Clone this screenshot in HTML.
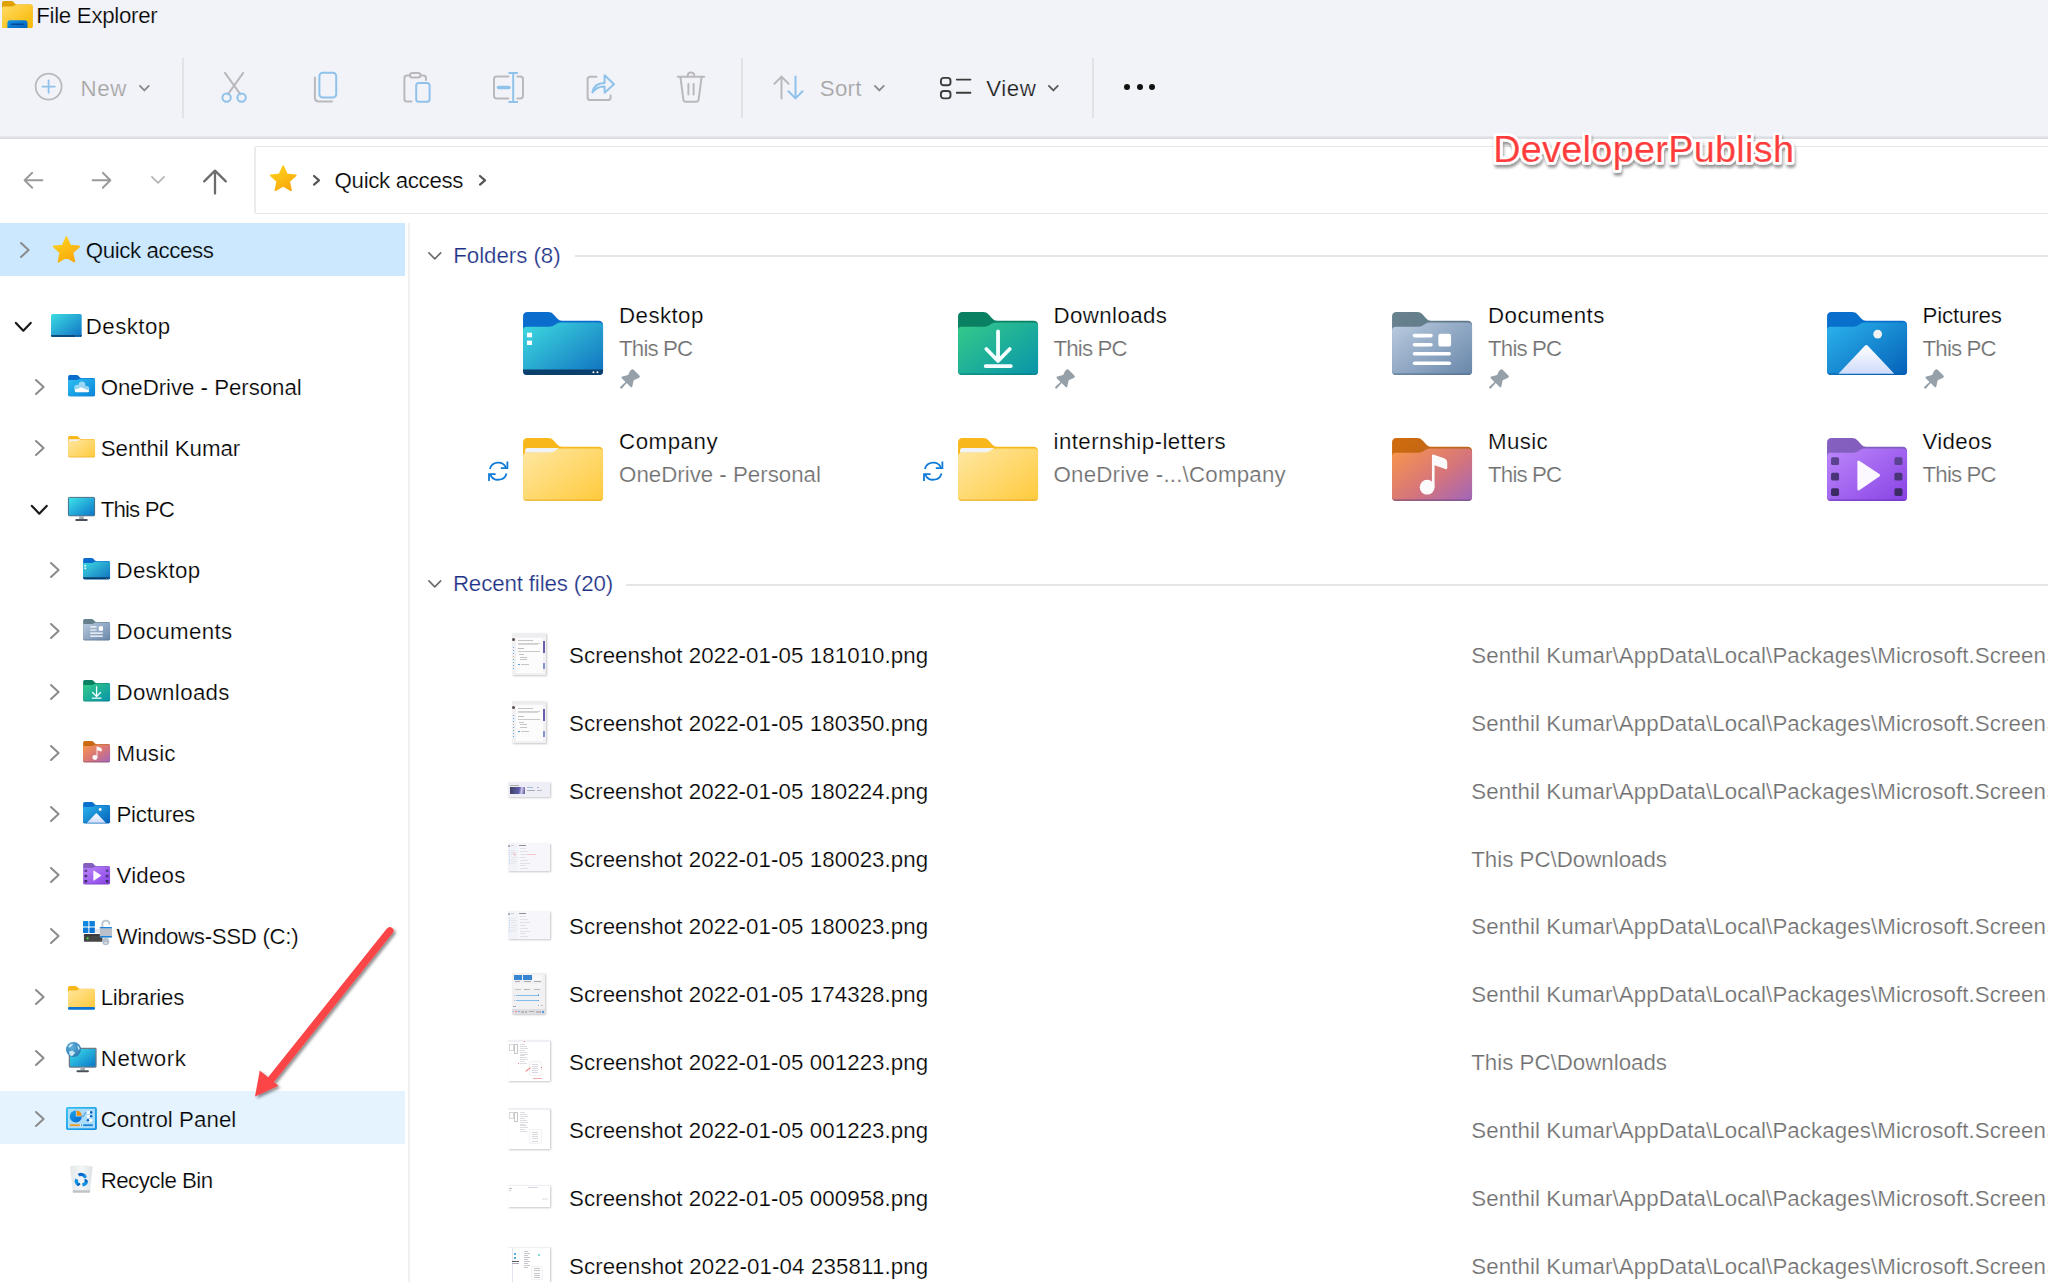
<!DOCTYPE html><html><head><meta charset="utf-8"><title>File Explorer</title><style>html,body{margin:0;padding:0;background:#fff;}body{width:2048px;height:1282px;overflow:hidden;position:relative;font-family:"Liberation Sans",sans-serif;}.t{position:absolute;white-space:pre;line-height:1;font-family:"Liberation Sans",sans-serif;}i{display:block;font-style:normal}</style></head><body><div style="position:absolute;left:0px;top:0px;width:2048px;height:136px;background:#f2f3f9;"></div>
<div style="position:absolute;left:0px;top:136px;width:2048px;height:3px;background:#dddee4;"></div>
<div style="position:absolute;left:0px;top:136px;width:2048px;height:1px;background:#e6e7ec;"></div>
<div style="position:absolute;left:254px;top:145.6px;width:1810px;height:68px;border:1.4px solid #e6e6e6;border-left:2px solid #ececec;border-radius:2px;background:#fff;box-sizing:border-box"></div>
<div style="position:absolute;left:0px;top:223px;width:405px;height:52.5px;background:#cce8ff;"></div>
<div style="position:absolute;left:0px;top:1091.2px;width:405.4px;height:53.3px;background:#e5f3ff;"></div>
<div style="position:absolute;left:407.5px;top:223px;width:2px;height:1060px;background:#f0f0f0;"></div>
<svg style="position:absolute;left:1.6px;top:1.2px;overflow:visible" width="30.6" height="27" viewBox="0 0 30.6 27" ><defs><linearGradient id="g1" x1="0" y1="0" x2="1" y2="1"><stop offset="0" stop-color="#ffdc64"/><stop offset="1" stop-color="#f8b600"/></linearGradient><linearGradient id="g2" x1="0" y1="0" x2="1" y2="1"><stop offset="0" stop-color="#1294ea"/><stop offset="1" stop-color="#0460b8"/></linearGradient></defs><path d="M0 2Q0 0 2 0H9.4Q10.8 0 11.6 1L12.8 2.6Q13.4 3.4 14.6 3.4H28.6Q30.6 3.4 30.6 5.4V25Q30.6 27 28.6 27H2Q0 27 0 25Z" fill="#dfa000"/><path d="M0 7.2Q0 5.6 1.6 5.6H10Q11.4 5.6 12.2 4.8L12.9 4.1Q13.6 3.5 14.8 3.5H29Q30.6 3.5 30.6 5.1V25.4Q30.6 27 29 27H1.6Q0 27 0 25.4Z" fill="url(#g1)"/><path d="M5.4 27V22Q5.4 19.2 8.2 19.2H22.7Q25.5 19.2 25.5 22V27Z" fill="url(#g2)"/><rect x="8.8" y="22.6" width="13" height="1.3" rx="0.6" fill="#0a4696"/></svg>
<svg style="position:absolute;left:33px;top:71px;overflow:visible" width="32" height="32" viewBox="0 0 32 32" ><g fill="none" stroke-width="2" stroke-linecap="round" stroke-linejoin="round"><circle cx="15.6" cy="15.6" r="13" stroke="#b9b9bd" stroke-width="1.8"/><path d="M15.6 9.4V21.8M9.4 15.6H21.8" stroke="#8fc2ea" stroke-width="1.8"/></g></svg>
<svg style="position:absolute;left:138.7px;top:85px;overflow:visible" width="10.7" height="6.4" viewBox="0 0 10.7 6.4" ><g fill="none" stroke-width="1.8" stroke-linecap="round" stroke-linejoin="round"><path d="M0.9 0.9L5.35 5.5L9.799999999999999 0.9" stroke="#8a8a8a"/></g></svg>
<div style="position:absolute;left:182.2px;top:57.6px;width:2px;height:60.2px;background:#e1e1e6;"></div>
<svg style="position:absolute;left:219px;top:71px;overflow:visible" width="30" height="33" viewBox="0 0 30 33" ><g fill="none" stroke-width="2" stroke-linecap="round" stroke-linejoin="round"><path d="M6 1.8L21.2 23.2M24.2 1.8L9 23.2" stroke="#b9b9bd"/><circle cx="7.6" cy="26.6" r="4.2" stroke="#8fc2ea"/><circle cx="22.6" cy="26.6" r="4.2" stroke="#8fc2ea"/></g></svg>
<svg style="position:absolute;left:313px;top:71px;overflow:visible" width="26" height="33" viewBox="0 0 26 33" ><g fill="none" stroke-width="2" stroke-linecap="round" stroke-linejoin="round"><path d="M1.9 6.4V26.6Q1.9 30.6 5.9 30.6H19" stroke="#b9b9bd"/><rect x="6.4" y="1.8" width="16.8" height="24.8" rx="3.4" stroke="#8fc2ea"/></g></svg>
<svg style="position:absolute;left:402px;top:71px;overflow:visible" width="30" height="33" viewBox="0 0 30 33" ><g fill="none" stroke-width="2" stroke-linecap="round" stroke-linejoin="round"><path d="M9.5 30.6H5Q2.4 30.6 2.4 28V7.2Q2.4 4.6 5 4.6H8M18.5 4.6H21.4Q24 4.6 24 7.2V9" stroke="#b9b9bd"/><rect x="8" y="2" width="10.5" height="4.6" rx="2.3" stroke="#b9b9bd"/><rect x="14.2" y="12" width="13.4" height="18.8" rx="2.6" stroke="#8fc2ea"/></g></svg>
<svg style="position:absolute;left:492px;top:71px;overflow:visible" width="33" height="33" viewBox="0 0 33 33" ><g fill="none" stroke-width="2" stroke-linecap="round" stroke-linejoin="round"><path d="M16.4 27.4H4.6Q2 27.4 2 24.8V8.2Q2 5.6 4.6 5.6H16.4M25.4 5.6H28.4Q31 5.6 31 8.2V24.8Q31 27.4 28.4 27.4H25.4" stroke="#b9b9bd"/><path d="M21.2 2V31M17.2 2H25.2M17.2 31H25.2" stroke="#8fc2ea"/><path d="M6.4 16.5H17" stroke="#8fc2ea" stroke-width="3.4"/></g></svg>
<svg style="position:absolute;left:585px;top:72px;overflow:visible" width="31" height="31" viewBox="0 0 31 31" ><g fill="none" stroke-width="2" stroke-linecap="round" stroke-linejoin="round"><path d="M11.4 4.8H5.2Q2.6 4.8 2.6 7.4V25.4Q2.6 28 5.2 28H23Q25.6 28 25.6 25.4V23.4" stroke="#b9b9bd"/><path d="M7.4 20.4Q9 11 19.6 11V3.2L29 12.2L19.6 20.8V14.4Q12 14 7.4 20.4Z" stroke="#8fc2ea"/></g></svg>
<svg style="position:absolute;left:676px;top:71px;overflow:visible" width="30" height="33" viewBox="0 0 30 33" ><g fill="none" stroke-width="2" stroke-linecap="round" stroke-linejoin="round"><path d="M1.8 5.8H28.2M11.6 5.4Q11.6 1.6 15 1.6Q18.4 1.6 18.4 5.4M4.4 6L7.4 28.6Q7.7 30.8 10 30.8H20Q22.3 30.8 22.6 28.6L25.6 6M12.4 13V23.6M17.6 13V23.6" stroke="#b9b9bd"/></g></svg>
<div style="position:absolute;left:741.4px;top:57.6px;width:2px;height:60.2px;background:#e1e1e6;"></div>
<svg style="position:absolute;left:773px;top:75px;overflow:visible" width="32" height="25" viewBox="0 0 32 25" ><g fill="none" stroke-width="2" stroke-linecap="round" stroke-linejoin="round"><path d="M8.5 23.6V1.6M1.4 8.8L8.5 1.6L15.6 8.8" stroke="#b9b9bd"/><path d="M22.5 1.4V23.4M15.4 16.2L22.5 23.4L29.6 16.2" stroke="#8fc2ea"/></g></svg>
<svg style="position:absolute;left:874px;top:84.9px;overflow:visible" width="10.7" height="6.4" viewBox="0 0 10.7 6.4" ><g fill="none" stroke-width="1.8" stroke-linecap="round" stroke-linejoin="round"><path d="M0.9 0.9L5.35 5.5L9.799999999999999 0.9" stroke="#8a8a8a"/></g></svg>
<svg style="position:absolute;left:939px;top:75.5px;overflow:visible" width="33" height="24" viewBox="0 0 33 24" ><g fill="none" stroke-width="1.9" stroke-linecap="round" stroke-linejoin="round"><rect x="1.9" y="1.9" width="9.6" height="7.4" rx="2.8" stroke="#3c3c3c"/><rect x="1.9" y="15" width="9.6" height="7.4" rx="2.8" stroke="#3c3c3c"/><path d="M17.8 3.6H31.4M17.8 16.8H31.4" stroke="#3c3c3c"/></g></svg>
<svg style="position:absolute;left:1048px;top:84.9px;overflow:visible" width="10.7" height="6.4" viewBox="0 0 10.7 6.4" ><g fill="none" stroke-width="1.8" stroke-linecap="round" stroke-linejoin="round"><path d="M0.9 0.9L5.35 5.5L9.799999999999999 0.9" stroke="#5a5a5a"/></g></svg>
<div style="position:absolute;left:1091.6px;top:57.6px;width:2px;height:60.2px;background:#e1e1e6;"></div>
<div style="position:absolute;left:1124.4px;top:84.3px;width:6px;height:6px;border-radius:50%;background:#111"></div>
<div style="position:absolute;left:1136.5px;top:84.3px;width:6px;height:6px;border-radius:50%;background:#111"></div>
<div style="position:absolute;left:1148.6px;top:84.3px;width:6px;height:6px;border-radius:50%;background:#111"></div>
<svg style="position:absolute;left:23px;top:171px;overflow:visible" width="21" height="19" viewBox="0 0 21 19" ><g fill="none" stroke-width="1.9" stroke-linecap="round" stroke-linejoin="round"><path d="M19.4 9.3H1.8M9.2 1.8L1.6 9.3L9.2 16.8" stroke="#9a9a9a"/></g></svg>
<svg style="position:absolute;left:91px;top:171px;overflow:visible" width="21" height="19" viewBox="0 0 21 19" ><g fill="none" stroke-width="1.9" stroke-linecap="round" stroke-linejoin="round"><path d="M1.6 9.3H19.2M11.8 1.8L19.4 9.3L11.8 16.8" stroke="#9a9a9a"/></g></svg>
<svg style="position:absolute;left:151px;top:176px;overflow:visible" width="14" height="7.8" viewBox="0 0 14 7.8" ><g fill="none" stroke-width="1.6" stroke-linecap="round" stroke-linejoin="round"><path d="M0.9 0.9L7.0 6.8999999999999995L13.1 0.9" stroke="#b2b2b2"/></g></svg>
<svg style="position:absolute;left:202px;top:169px;overflow:visible" width="26" height="26" viewBox="0 0 26 26" ><g fill="none" stroke-width="2.3" stroke-linecap="round" stroke-linejoin="round"><path d="M13 24.6V2M2.2 12.4L13 1.6L23.8 12.4" stroke="#6c6c6c"/></g></svg>
<svg style="position:absolute;left:269.2px;top:165.4px;overflow:visible" width="28.4" height="28.4" viewBox="-4 -2 108 108" ><defs><linearGradient id="g3" x1="0.2" y1="0" x2="0.8" y2="1"><stop offset="0" stop-color="#ffd21c"/><stop offset="1" stop-color="#f8a60a"/></linearGradient></defs><path d="M50.0 3.0L63.8 34.0L97.6 37.5L72.3 60.3L79.4 93.5L50.0 76.5L20.6 93.5L27.7 60.3L2.4 37.5L36.2 34.0Z" fill="url(#g3)" stroke="url(#g3)" stroke-width="7" stroke-linejoin="round"/></svg>
<svg style="position:absolute;left:313px;top:174.6px;overflow:visible" width="7" height="10.6" viewBox="0 0 7 10.6" ><g fill="none" stroke-width="2.2" stroke-linecap="round" stroke-linejoin="round"><path d="M1 1L6 5.3L1 9.6" stroke="#555"/></g></svg>
<svg style="position:absolute;left:478.8px;top:174.6px;overflow:visible" width="7" height="10.6" viewBox="0 0 7 10.6" ><g fill="none" stroke-width="2.2" stroke-linecap="round" stroke-linejoin="round"><path d="M1 1L6 5.3L1 9.6" stroke="#555"/></g></svg>
<svg style="position:absolute;left:19.6px;top:242.29999999999998px;overflow:visible" width="9.6" height="16" viewBox="0 0 9.6 16" ><g fill="none" stroke-width="2" stroke-linecap="round" stroke-linejoin="round"><path d="M1 1L8.6 8.0L1 15" stroke="#8a8a8a"/></g></svg>
<svg style="position:absolute;left:51.6px;top:235.89999999999998px;overflow:visible" width="28.8" height="28.8" viewBox="-4 -2 108 108" ><defs><linearGradient id="g4" x1="0.2" y1="0" x2="0.8" y2="1"><stop offset="0" stop-color="#ffd21c"/><stop offset="1" stop-color="#f8a60a"/></linearGradient></defs><path d="M50.0 3.0L63.8 34.0L97.6 37.5L72.3 60.3L79.4 93.5L50.0 76.5L20.6 93.5L27.7 60.3L2.4 37.5L36.2 34.0Z" fill="url(#g4)" stroke="url(#g4)" stroke-width="7" stroke-linejoin="round"/></svg>
<svg style="position:absolute;left:15.2px;top:321.6px;overflow:visible" width="16.6" height="9.6" viewBox="0 0 16.6 9.6" ><g fill="none" stroke-width="2.2" stroke-linecap="round" stroke-linejoin="round"><path d="M0.9 0.9L8.3 8.7L15.700000000000001 0.9" stroke="#1a1a1a"/></g></svg>
<svg style="position:absolute;left:51px;top:314.00000000000006px;overflow:visible" width="30.7" height="23" viewBox="0 0 30.7 23" ><defs><linearGradient id="g5" x1="0" y1="0" x2="1" y2="1"><stop offset="0" stop-color="#3cdce2"/><stop offset="1" stop-color="#1072c6"/></linearGradient></defs><rect x="0" y="0" width="30.7" height="23" rx="1.6" fill="url(#g5)"/><path d="M0 20.9H30.7V21.4Q30.7 23 29.1 23H1.6Q0 23 0 21.4Z" fill="#0c4c7c"/><rect x="24.3" y="21.3" width="1.6" height="1.7" fill="#1a80d0"/><rect x="27" y="21.3" width="1.6" height="1.7" fill="#1a80d0"/></svg>
<svg style="position:absolute;left:34.6px;top:379.20000000000005px;overflow:visible" width="9.6" height="16" viewBox="0 0 9.6 16" ><g fill="none" stroke-width="2" stroke-linecap="round" stroke-linejoin="round"><path d="M1 1L8.6 8.0L1 15" stroke="#8a8a8a"/></g></svg>
<svg style="position:absolute;left:68px;top:375.1px;overflow:visible" width="27.2" height="21.2" viewBox="0 0 80 63" ><defs><linearGradient id="g6" x1="0" y1="0.1" x2="1" y2="1"><stop offset="0" stop-color="#2cbcf0"/><stop offset="1" stop-color="#0a84d8"/></linearGradient></defs><path d="M0 4.5Q0 0 4.5 0H25Q28.5 0 30.6 2.4L34.2 6.6Q36 8.8 39 8.8H75.5Q80 8.8 80 13.3V58.5Q80 63 75.5 63H4.5Q0 63 0 58.5Z" fill="#0a6ccd"/><path d="M0 18.2Q0 14.7 3.5 14.7H26Q29.5 14.7 32 12.8L33.8 11.6Q35.6 10.5 38.5 10.5H76Q80 10.5 80 14.5V59Q80 63 76 63H4Q0 63 0 59Z" fill="url(#g6)"/><g opacity="0.55" fill="#fff"><circle cx="27.5" cy="38.5" r="9.5"/><circle cx="41" cy="30" r="10.5"/><circle cx="54.5" cy="41.5" r="8.5"/><rect x="27" y="38" width="28" height="12"/></g><path d="M26 51.5Q19 51.5 19.5 46Q20.5 41.5 26 42L38.5 36.5L56 43.5Q63 44.5 62.5 48.5Q61.5 51.5 57 51.5Z" fill="#fff"/></svg>
<svg style="position:absolute;left:34.6px;top:440.20000000000005px;overflow:visible" width="9.6" height="16" viewBox="0 0 9.6 16" ><g fill="none" stroke-width="2" stroke-linecap="round" stroke-linejoin="round"><path d="M1 1L8.6 8.0L1 15" stroke="#8a8a8a"/></g></svg>
<svg style="position:absolute;left:68px;top:436.1px;overflow:visible" width="27.2" height="21.2" viewBox="0 0 80 63" ><defs><linearGradient id="g8" x1="0" y1="0.1" x2="1" y2="1"><stop offset="0" stop-color="#ffe69e"/><stop offset="1" stop-color="#ffca3c"/></linearGradient></defs><path d="M0 4.5Q0 0 4.5 0H25Q28.5 0 30.6 2.4L34.2 6.6Q36 8.8 39 8.8H75.5Q80 8.8 80 13.3V58.5Q80 63 75.5 63H4.5Q0 63 0 58.5Z" fill="#f8b81c"/><path d="M2 12.5Q2 10 4.5 10H36L31 14.8H2Z" fill="#f1f3f7"/><path d="M0 18.2Q0 14.7 3.5 14.7H26Q29.5 14.7 32 12.8L33.8 11.6Q35.6 10.5 38.5 10.5H76Q80 10.5 80 14.5V59Q80 63 76 63H4Q0 63 0 59Z" fill="url(#g8)"/><path d="M0 61.2H80V59Q80 63 76 63H4Q0 63 0 59Z" fill="#e8ac28" opacity="0.55"/></svg>
<svg style="position:absolute;left:30.5px;top:504.6px;overflow:visible" width="16.6" height="9.6" viewBox="0 0 16.6 9.6" ><g fill="none" stroke-width="2.2" stroke-linecap="round" stroke-linejoin="round"><path d="M0.9 0.9L8.3 8.7L15.700000000000001 0.9" stroke="#1a1a1a"/></g></svg>
<svg style="position:absolute;left:68px;top:496.6px;overflow:visible" width="27" height="24.2" viewBox="0 0 27 24.2" ><defs><linearGradient id="g10" x1="0" y1="0" x2="1" y2="1"><stop offset="0" stop-color="#3ee4ea"/><stop offset="1" stop-color="#0a74c8"/></linearGradient></defs><rect x="0.4" y="0.4" width="26.2" height="18.4" rx="0.8" fill="url(#g10)" stroke="#3d6478" stroke-width="0.9"/><rect x="11.2" y="19.2" width="4.6" height="2.9" fill="#a4aab4"/><rect x="7.3" y="22.0" width="12.4" height="1.9" rx="0.9" fill="#4a5058"/></svg>
<svg style="position:absolute;left:49.8px;top:562.2px;overflow:visible" width="9.6" height="16" viewBox="0 0 9.6 16" ><g fill="none" stroke-width="2" stroke-linecap="round" stroke-linejoin="round"><path d="M1 1L8.6 8.0L1 15" stroke="#8a8a8a"/></g></svg>
<svg style="position:absolute;left:83px;top:558.1px;overflow:visible" width="27.2" height="21.2" viewBox="0 0 80 63" ><defs><linearGradient id="g11" x1="0" y1="0.1" x2="1" y2="1"><stop offset="0" stop-color="#3cd6de"/><stop offset="1" stop-color="#1070c0"/></linearGradient></defs><path d="M0 4.5Q0 0 4.5 0H25Q28.5 0 30.6 2.4L34.2 6.6Q36 8.8 39 8.8H75.5Q80 8.8 80 13.3V58.5Q80 63 75.5 63H4.5Q0 63 0 58.5Z" fill="#0a6ccd"/><path d="M0 18.2Q0 14.7 3.5 14.7H26Q29.5 14.7 32 12.8L33.8 11.6Q35.6 10.5 38.5 10.5H76Q80 10.5 80 14.5V59Q80 63 76 63H4Q0 63 0 59Z" fill="url(#g11)"/><path d="M0 57.6H80V59Q80 63 76 63H4Q0 63 0 59Z" fill="#0b3f6c"/><rect x="3.9" y="20.7" width="5.1" height="4.6" fill="#fff"/><rect x="3.9" y="28.6" width="5.1" height="4.4" fill="#fff"/><circle cx="70.4" cy="60.2" r="1" fill="#fff"/><circle cx="74.4" cy="60.2" r="1" fill="#fff"/></svg>
<svg style="position:absolute;left:49.8px;top:623.2px;overflow:visible" width="9.6" height="16" viewBox="0 0 9.6 16" ><g fill="none" stroke-width="2" stroke-linecap="round" stroke-linejoin="round"><path d="M1 1L8.6 8.0L1 15" stroke="#8a8a8a"/></g></svg>
<svg style="position:absolute;left:83px;top:619.1px;overflow:visible" width="27.2" height="21.2" viewBox="0 0 80 63" ><defs><linearGradient id="g13" x1="0" y1="0.1" x2="1" y2="1"><stop offset="0" stop-color="#b6c8dc"/><stop offset="1" stop-color="#6886aa"/></linearGradient><linearGradient id="t14" x1="0" y1="0" x2="1" y2="1"><stop offset="0" stop-color="#68828e"/><stop offset="1" stop-color="#587082"/></linearGradient></defs><path d="M0 4.5Q0 0 4.5 0H25Q28.5 0 30.6 2.4L34.2 6.6Q36 8.8 39 8.8H75.5Q80 8.8 80 13.3V58.5Q80 63 75.5 63H4.5Q0 63 0 58.5Z" fill="url(#t14)"/><path d="M0 18.2Q0 14.7 3.5 14.7H26Q29.5 14.7 32 12.8L33.8 11.6Q35.6 10.5 38.5 10.5H76Q80 10.5 80 14.5V59Q80 63 76 63H4Q0 63 0 59Z" fill="url(#g13)"/><path d="M0 61.2H80V59Q80 63 76 63H4Q0 63 0 59Z" fill="#506a88" opacity="0.55"/><g fill="#fff"><rect x="20.7" y="21.8" width="20" height="3.6" rx="1.8"/><rect x="20.7" y="30.9" width="20" height="3.6" rx="1.8"/><rect x="20.7" y="40" width="38.3" height="3.6" rx="1.8"/><rect x="20.7" y="49.4" width="38.3" height="3.6" rx="1.8"/><rect x="46.3" y="21.8" width="12.7" height="12.8" rx="2.2"/></g></svg>
<svg style="position:absolute;left:49.8px;top:684.2px;overflow:visible" width="9.6" height="16" viewBox="0 0 9.6 16" ><g fill="none" stroke-width="2" stroke-linecap="round" stroke-linejoin="round"><path d="M1 1L8.6 8.0L1 15" stroke="#8a8a8a"/></g></svg>
<svg style="position:absolute;left:83px;top:680.1px;overflow:visible" width="27.2" height="21.2" viewBox="0 0 80 63" ><defs><linearGradient id="g15" x1="0" y1="0.1" x2="1" y2="1"><stop offset="0" stop-color="#33c88a"/><stop offset="1" stop-color="#0894aa"/></linearGradient></defs><path d="M0 4.5Q0 0 4.5 0H25Q28.5 0 30.6 2.4L34.2 6.6Q36 8.8 39 8.8H75.5Q80 8.8 80 13.3V58.5Q80 63 75.5 63H4.5Q0 63 0 58.5Z" fill="#0a8062"/><path d="M0 18.2Q0 14.7 3.5 14.7H26Q29.5 14.7 32 12.8L33.8 11.6Q35.6 10.5 38.5 10.5H76Q80 10.5 80 14.5V59Q80 63 76 63H4Q0 63 0 59Z" fill="url(#g15)"/><path d="M0 61.2H80V59Q80 63 76 63H4Q0 63 0 59Z" fill="#067a80" opacity="0.55"/><path d="M40 19.5V48.5M28.3 37L40 49L51.7 37M27.6 54.1H52.8" fill="none" stroke="#f6ffff" stroke-width="3.8" stroke-linecap="round" stroke-linejoin="round"/></svg>
<svg style="position:absolute;left:49.8px;top:745.2px;overflow:visible" width="9.6" height="16" viewBox="0 0 9.6 16" ><g fill="none" stroke-width="2" stroke-linecap="round" stroke-linejoin="round"><path d="M1 1L8.6 8.0L1 15" stroke="#8a8a8a"/></g></svg>
<svg style="position:absolute;left:83px;top:741.1px;overflow:visible" width="27.2" height="21.2" viewBox="0 0 80 63" ><defs><linearGradient id="g17" x1="0" y1="0.1" x2="1" y2="1"><stop offset="0" stop-color="#f6944e"/><stop offset="0.55" stop-color="#d4747c"/><stop offset="1" stop-color="#a066bc"/></linearGradient><linearGradient id="t18" x1="0" y1="0" x2="1" y2="1"><stop offset="0" stop-color="#d06c0c"/><stop offset="1" stop-color="#a85e2a"/></linearGradient></defs><path d="M0 4.5Q0 0 4.5 0H25Q28.5 0 30.6 2.4L34.2 6.6Q36 8.8 39 8.8H75.5Q80 8.8 80 13.3V58.5Q80 63 75.5 63H4.5Q0 63 0 58.5Z" fill="url(#t18)"/><path d="M0 18.2Q0 14.7 3.5 14.7H26Q29.5 14.7 32 12.8L33.8 11.6Q35.6 10.5 38.5 10.5H76Q80 10.5 80 14.5V59Q80 63 76 63H4Q0 63 0 59Z" fill="url(#g17)"/><path d="M0 61.2H80V59Q80 63 76 63H4Q0 63 0 59Z" fill="#704a80" opacity="0.55"/><g fill="#fbfbfb"><circle cx="35.1" cy="49.2" r="7.4"/><path d="M39.9 17.8Q39.9 16 41.8 16.7L52 20.3Q55.2 21.5 55.2 25V30Q55.2 31.8 53.4 31.1L42.5 27.2V49.2H39.9Z"/></g></svg>
<svg style="position:absolute;left:49.8px;top:806.2px;overflow:visible" width="9.6" height="16" viewBox="0 0 9.6 16" ><g fill="none" stroke-width="2" stroke-linecap="round" stroke-linejoin="round"><path d="M1 1L8.6 8.0L1 15" stroke="#8a8a8a"/></g></svg>
<svg style="position:absolute;left:83px;top:802.1px;overflow:visible" width="27.2" height="21.2" viewBox="0 0 80 63" ><defs><linearGradient id="g20" x1="0" y1="0.1" x2="1" y2="1"><stop offset="0" stop-color="#2ab0ea"/><stop offset="1" stop-color="#0460b8"/></linearGradient></defs><path d="M0 4.5Q0 0 4.5 0H25Q28.5 0 30.6 2.4L34.2 6.6Q36 8.8 39 8.8H75.5Q80 8.8 80 13.3V58.5Q80 63 75.5 63H4.5Q0 63 0 58.5Z" fill="#0870cc"/><path d="M0 18.2Q0 14.7 3.5 14.7H26Q29.5 14.7 32 12.8L33.8 11.6Q35.6 10.5 38.5 10.5H76Q80 10.5 80 14.5V59Q80 63 76 63H4Q0 63 0 59Z" fill="url(#g20)"/><path d="M0 61.2H80V59Q80 63 76 63H4Q0 63 0 59Z" fill="#0458a8" opacity="0.55"/><defs><linearGradient id="g19" x1="0" y1="0" x2="0" y2="1"><stop offset="0" stop-color="#ffffff"/><stop offset="1" stop-color="#cfdbfb"/></linearGradient></defs><circle cx="50.6" cy="22.1" r="4.4" fill="#f3f3f3"/><path d="M11.4 61.8L37.6 34Q39.3 32.2 41 34L67.2 61.8Z" fill="url(#g19)"/></svg>
<svg style="position:absolute;left:49.8px;top:867.2px;overflow:visible" width="9.6" height="16" viewBox="0 0 9.6 16" ><g fill="none" stroke-width="2" stroke-linecap="round" stroke-linejoin="round"><path d="M1 1L8.6 8.0L1 15" stroke="#8a8a8a"/></g></svg>
<svg style="position:absolute;left:83px;top:863.1px;overflow:visible" width="27.2" height="21.2" viewBox="0 0 80 63" ><defs><linearGradient id="g22" x1="0" y1="0.1" x2="1" y2="1"><stop offset="0" stop-color="#ba84fa"/><stop offset="1" stop-color="#8842e4"/></linearGradient><linearGradient id="t23" x1="0" y1="0" x2="1" y2="1"><stop offset="0" stop-color="#8660c0"/><stop offset="1" stop-color="#7a58b8"/></linearGradient></defs><path d="M0 4.5Q0 0 4.5 0H25Q28.5 0 30.6 2.4L34.2 6.6Q36 8.8 39 8.8H75.5Q80 8.8 80 13.3V58.5Q80 63 75.5 63H4.5Q0 63 0 58.5Z" fill="url(#t23)"/><path d="M0 18.2Q0 14.7 3.5 14.7H26Q29.5 14.7 32 12.8L33.8 11.6Q35.6 10.5 38.5 10.5H76Q80 10.5 80 14.5V59Q80 63 76 63H4Q0 63 0 59Z" fill="url(#g22)"/><path d="M0 61.2H80V59Q80 63 76 63H4Q0 63 0 59Z" fill="#6a34b8" opacity="0.55"/><rect x="4" y="19.3" width="8" height="7.7" rx="1.6" fill="#5b4290"/><rect x="4" y="34.8" width="8" height="7.7" rx="1.6" fill="#4a3478"/><rect x="4" y="50.2" width="8" height="7.7" rx="1.6" fill="#3c2a64"/><rect x="67.4" y="19.3" width="8" height="7.7" rx="1.6" fill="#5b4290"/><rect x="67.4" y="34.8" width="8" height="7.7" rx="1.6" fill="#4a3478"/><rect x="67.4" y="50.2" width="8" height="7.7" rx="1.6" fill="#3c2a64"/><path d="M30.3 24.3Q30.3 21.6 32.6 23.1L52.3 36Q54 37.2 52.3 38.4L32.6 52Q30.3 53.5 30.3 50.8Z" fill="#fbf8ff"/></svg>
<svg style="position:absolute;left:49.8px;top:928.2px;overflow:visible" width="9.6" height="16" viewBox="0 0 9.6 16" ><g fill="none" stroke-width="2" stroke-linecap="round" stroke-linejoin="round"><path d="M1 1L8.6 8.0L1 15" stroke="#8a8a8a"/></g></svg>
<svg style="position:absolute;left:83px;top:920.0px;overflow:visible" width="29.4" height="25.2" viewBox="0 0 29.4 25.2" ><g fill="#1088e0"><rect x="0" y="1" width="5.4" height="5.4" rx="0.5"/><rect x="6.4" y="1" width="5.5" height="5.4" rx="0.5" fill="#0e80dc"/><rect x="0" y="7.4" width="5.4" height="5.6" rx="0.5" fill="#0c7cd8"/><rect x="6.4" y="7.4" width="5.5" height="5.6" rx="0.5" fill="#0672d2"/></g><rect x="11.9" y="9.1" width="5" height="4.2" fill="#e4e6ea"/><rect x="0.9" y="14.2" width="18.6" height="7.6" rx="0.8" fill="#444"/><rect x="0.9" y="14.2" width="18.6" height="1.4" rx="0.7" fill="#2e2e2e"/><circle cx="4.6" cy="18.3" r="1.1" fill="#3ee048"/><path d="M19.4 7V3.6Q19.4 0.6 22.9 0.6Q26.2 0.6 26.4 3.8" fill="none" stroke="#b8c4d0" stroke-width="1.8" stroke-linecap="round"/><rect x="16.8" y="6.9" width="12.2" height="10.5" rx="0.8" fill="#b9c0ca"/><rect x="16.8" y="6.9" width="12.2" height="1.4" rx="0.6" fill="#1c84dc"/><rect x="16.8" y="16" width="12.2" height="1.4" rx="0.6" fill="#1c84dc"/><circle cx="22.8" cy="21.6" r="3.6" fill="#b4c0cc"/><ellipse cx="22.8" cy="23" rx="1.4" ry="0.8" fill="#eef2f6"/></svg>
<svg style="position:absolute;left:34.6px;top:989.2px;overflow:visible" width="9.6" height="16" viewBox="0 0 9.6 16" ><g fill="none" stroke-width="2" stroke-linecap="round" stroke-linejoin="round"><path d="M1 1L8.6 8.0L1 15" stroke="#8a8a8a"/></g></svg>
<svg style="position:absolute;left:68px;top:985.8000000000001px;overflow:visible" width="27" height="23.7" viewBox="0 0 27 23.7" ><defs><linearGradient id="g24" x1="0" y1="0" x2="1" y2="1"><stop offset="0" stop-color="#ffe69e"/><stop offset="1" stop-color="#ffc93c"/></linearGradient></defs><path d="M0 2Q0 0 2 0H7Q8.5 0 9.3 0.9L10.3 2Q11 2.7 12.2 2.7H25Q27 2.7 27 4.7V19Q27 21 25 21H2Q0 21 0 19Z" fill="#f8b81c"/><path d="M0 6Q0 4.4 1.6 4.4H8Q9.2 4.4 10 3.8L10.6 3.3Q11.2 2.9 12.4 2.9H25.4Q27 2.9 27 4.5V21H0Z" fill="url(#g24)"/><rect x="0" y="20.9" width="27" height="2.8" rx="1.2" fill="#0a74d0"/></svg>
<svg style="position:absolute;left:34.6px;top:1050.1999999999998px;overflow:visible" width="9.6" height="16" viewBox="0 0 9.6 16" ><g fill="none" stroke-width="2" stroke-linecap="round" stroke-linejoin="round"><path d="M1 1L8.6 8.0L1 15" stroke="#8a8a8a"/></g></svg>
<svg style="position:absolute;left:69.4px;top:1048.2999999999997px;overflow:visible" width="27.4" height="24.5" viewBox="0 0 27.4 24.5" ><defs><linearGradient id="g25" x1="0" y1="0" x2="1" y2="1"><stop offset="0" stop-color="#3ee4ea"/><stop offset="1" stop-color="#0a74c8"/></linearGradient></defs><rect x="0.4" y="0.4" width="26.599999999999998" height="18.7" rx="0.8" fill="url(#g25)" stroke="#6c7a86" stroke-width="1.3"/><rect x="11.399999999999999" y="19.5" width="4.6" height="2.9" fill="#a4aab4"/><rect x="7.499999999999999" y="22.3" width="12.4" height="1.9" rx="0.9" fill="#4a5058"/></svg>
<svg style="position:absolute;left:66.1px;top:1041.8999999999999px;overflow:visible" width="15.0" height="15.0" viewBox="0 0 15 15" ><defs><radialGradient id="g26" cx="0.4" cy="0.35" r="0.7"><stop offset="0" stop-color="#5eb0dc"/><stop offset="1" stop-color="#2878b0"/></radialGradient></defs><circle cx="7.5" cy="7.5" r="7.5" fill="url(#g26)"/><path d="M2.2 4.5Q4 1.8 7.2 1.6L6.2 3.4L3.6 5.8Z M3 9.4L6.4 8.6L9.2 11L6 14.2L3.6 13Z M11.6 3.2Q13.6 4.6 13.8 7.2L12.4 8L11.6 5.6Z" fill="#d6eef6" opacity="0.9"/></svg>
<svg style="position:absolute;left:34.6px;top:1111.1999999999998px;overflow:visible" width="9.6" height="16" viewBox="0 0 9.6 16" ><g fill="none" stroke-width="2" stroke-linecap="round" stroke-linejoin="round"><path d="M1 1L8.6 8.0L1 15" stroke="#8a8a8a"/></g></svg>
<svg style="position:absolute;left:66.1px;top:1106.7999999999997px;overflow:visible" width="30.9" height="23" viewBox="0 0 30.9 23" ><defs><linearGradient id="g27" x1="0" y1="0" x2="1" y2="1"><stop offset="0" stop-color="#34c0f0"/><stop offset="1" stop-color="#0e8ae0"/></linearGradient><linearGradient id="g28" x1="0" y1="0" x2="0.6" y2="1"><stop offset="0" stop-color="#1ea4ea"/><stop offset="1" stop-color="#0670d4"/></linearGradient></defs><rect x="0" y="0" width="30.9" height="23" rx="1.8" fill="url(#g27)"/><rect x="1.9" y="1.7" width="27.1" height="19.6" fill="#abdcf8"/><circle cx="9.8" cy="9.4" r="6" fill="url(#g28)"/><path d="M9.8 9.4V3.2H10.3Q15.8 3.6 16 9.4Z" fill="#abdcf8"/><path d="M10.6 8.7V3.4Q15.2 3.9 15.8 8.7Z" fill="#f28e0c"/><path d="M15.8 9.4Q18 9.9 18.3 7.8Q18.5 5.4 20.8 5.4" fill="none" stroke="#1670c8" stroke-width="0.7"/><g><rect x="20.6" y="4" width="5.8" height="2.8" rx="1.4" fill="#fff"/><circle cx="25.2" cy="5.4" r="1.3" fill="#0a60c4"/><rect x="20.6" y="7.9" width="5.8" height="2.8" rx="1.4" fill="#fff"/><circle cx="25.2" cy="9.3" r="1.3" fill="#0a60c4"/><rect x="20.6" y="11.9" width="5.8" height="2.8" rx="1.4" fill="#fff"/><circle cx="21.9" cy="13.3" r="1.3" fill="#0a60c4"/></g><rect x="4" y="17.3" width="9.7" height="1.8" fill="#f09a28"/><rect x="14.6" y="16.7" width="1.6" height="3" rx="0.5" fill="#fff"/><rect x="15" y="17.2" width="0.8" height="2" fill="#1670c8"/><rect x="17.2" y="17.3" width="9.6" height="1.8" fill="#1a84dc"/></svg>
<svg style="position:absolute;left:70.2px;top:1165.2999999999997px;overflow:visible" width="22.8" height="27.7" viewBox="0 0 22.8 27.7" ><defs><linearGradient id="g29" x1="0" y1="0" x2="1" y2="0"><stop offset="0" stop-color="#e4e8ea"/><stop offset="0.5" stop-color="#f4f6f7"/><stop offset="1" stop-color="#dfe3e5"/></linearGradient></defs><path d="M0 1.4Q11.4 -1 22.8 1.4L20 26.4H2.8Z" fill="url(#g29)"/><path d="M2.7 25.2H20.1L19.9 27.7H2.9Z" fill="#c0c4c8"/><g fill="none" stroke="#0a7cdc" stroke-width="3.2" stroke-linecap="butt"><path d="M8.6 10.2Q11.4 8.2 14.4 10.8" stroke="#0a68cc"/><path d="M14.2 10.2L15.4 13" stroke="#1090e4"/><path d="M6.8 14.2Q5.2 17.4 8.6 19.8" stroke="#1090e4"/><path d="M8.2 18.8L9.4 20.2" stroke="#0860c0"/><path d="M16.4 15.6Q16.6 19 12.4 20" stroke="#1090e4"/><path d="M16.8 15L15 16.2" stroke="#0860c0"/></g></svg>
<svg style="position:absolute;left:428.2px;top:251.9px;overflow:visible" width="13.6" height="7.8" viewBox="0 0 13.6 7.8" ><g fill="none" stroke-width="1.6" stroke-linecap="round" stroke-linejoin="round"><path d="M0.9 0.9L6.8 6.8999999999999995L12.7 0.9" stroke="#6a6a6a"/></g></svg>
<div style="position:absolute;left:574.5px;top:255.2px;width:1480px;height:2px;background:#e5e5e5;"></div>
<svg style="position:absolute;left:428.2px;top:580.4px;overflow:visible" width="13.6" height="7.8" viewBox="0 0 13.6 7.8" ><g fill="none" stroke-width="1.6" stroke-linecap="round" stroke-linejoin="round"><path d="M0.9 0.9L6.8 6.8999999999999995L12.7 0.9" stroke="#6a6a6a"/></g></svg>
<div style="position:absolute;left:626.2px;top:583.7px;width:1430px;height:2px;background:#e5e5e5;"></div>
<svg style="position:absolute;left:523.2px;top:312.3px;overflow:visible" width="80.1" height="63" viewBox="0 0 80 63" ><defs><linearGradient id="g30" x1="0" y1="0.1" x2="1" y2="1"><stop offset="0" stop-color="#3cd6de"/><stop offset="1" stop-color="#1070c0"/></linearGradient></defs><path d="M0 4.5Q0 0 4.5 0H25Q28.5 0 30.6 2.4L34.2 6.6Q36 8.8 39 8.8H75.5Q80 8.8 80 13.3V58.5Q80 63 75.5 63H4.5Q0 63 0 58.5Z" fill="#0a6ccd"/><path d="M0 18.2Q0 14.7 3.5 14.7H26Q29.5 14.7 32 12.8L33.8 11.6Q35.6 10.5 38.5 10.5H76Q80 10.5 80 14.5V59Q80 63 76 63H4Q0 63 0 59Z" fill="url(#g30)"/><path d="M0 57.6H80V59Q80 63 76 63H4Q0 63 0 59Z" fill="#0b3f6c"/><rect x="3.9" y="20.7" width="5.1" height="4.6" fill="#fff"/><rect x="3.9" y="28.6" width="5.1" height="4.4" fill="#fff"/><circle cx="70.4" cy="60.2" r="1" fill="#fff"/><circle cx="74.4" cy="60.2" r="1" fill="#fff"/></svg>
<svg style="position:absolute;left:620.1px;top:369px;overflow:visible" width="20" height="20" viewBox="0 0 20 20" ><path d="M11.6 0.6Q12.6 -0.3 13.7 0.8L19.4 6.6Q20.5 7.8 19.2 8.8L13.7 11.3L12.3 17.5Q11.7 19.1 10.4 17.8L6.7 14.1L2.3 19.1Q1.3 20.1 0.4 19.3Q-0.4 18.4 0.6 17.5L5.5 12.9L1.8 9.2Q0.7 7.9 2.4 7.5L8.1 5.9L10.2 1.7Z" fill="#96a0a8"/></svg>
<svg style="position:absolute;left:957.6px;top:312.3px;overflow:visible" width="80.1" height="63" viewBox="0 0 80 63" ><defs><linearGradient id="g32" x1="0" y1="0.1" x2="1" y2="1"><stop offset="0" stop-color="#33c88a"/><stop offset="1" stop-color="#0894aa"/></linearGradient></defs><path d="M0 4.5Q0 0 4.5 0H25Q28.5 0 30.6 2.4L34.2 6.6Q36 8.8 39 8.8H75.5Q80 8.8 80 13.3V58.5Q80 63 75.5 63H4.5Q0 63 0 58.5Z" fill="#0a8062"/><path d="M0 18.2Q0 14.7 3.5 14.7H26Q29.5 14.7 32 12.8L33.8 11.6Q35.6 10.5 38.5 10.5H76Q80 10.5 80 14.5V59Q80 63 76 63H4Q0 63 0 59Z" fill="url(#g32)"/><path d="M0 61.2H80V59Q80 63 76 63H4Q0 63 0 59Z" fill="#067a80" opacity="0.55"/><path d="M40 19.5V48.5M28.3 37L40 49L51.7 37M27.6 54.1H52.8" fill="none" stroke="#f6ffff" stroke-width="3.8" stroke-linecap="round" stroke-linejoin="round"/></svg>
<svg style="position:absolute;left:1054.5px;top:369px;overflow:visible" width="20" height="20" viewBox="0 0 20 20" ><path d="M11.6 0.6Q12.6 -0.3 13.7 0.8L19.4 6.6Q20.5 7.8 19.2 8.8L13.7 11.3L12.3 17.5Q11.7 19.1 10.4 17.8L6.7 14.1L2.3 19.1Q1.3 20.1 0.4 19.3Q-0.4 18.4 0.6 17.5L5.5 12.9L1.8 9.2Q0.7 7.9 2.4 7.5L8.1 5.9L10.2 1.7Z" fill="#96a0a8"/></svg>
<svg style="position:absolute;left:1392.2px;top:312.3px;overflow:visible" width="80.1" height="63" viewBox="0 0 80 63" ><defs><linearGradient id="g34" x1="0" y1="0.1" x2="1" y2="1"><stop offset="0" stop-color="#b6c8dc"/><stop offset="1" stop-color="#6886aa"/></linearGradient><linearGradient id="t35" x1="0" y1="0" x2="1" y2="1"><stop offset="0" stop-color="#68828e"/><stop offset="1" stop-color="#587082"/></linearGradient></defs><path d="M0 4.5Q0 0 4.5 0H25Q28.5 0 30.6 2.4L34.2 6.6Q36 8.8 39 8.8H75.5Q80 8.8 80 13.3V58.5Q80 63 75.5 63H4.5Q0 63 0 58.5Z" fill="url(#t35)"/><path d="M0 18.2Q0 14.7 3.5 14.7H26Q29.5 14.7 32 12.8L33.8 11.6Q35.6 10.5 38.5 10.5H76Q80 10.5 80 14.5V59Q80 63 76 63H4Q0 63 0 59Z" fill="url(#g34)"/><path d="M0 61.2H80V59Q80 63 76 63H4Q0 63 0 59Z" fill="#506a88" opacity="0.55"/><g fill="#fff"><rect x="20.7" y="21.8" width="20" height="3.6" rx="1.8"/><rect x="20.7" y="30.9" width="20" height="3.6" rx="1.8"/><rect x="20.7" y="40" width="38.3" height="3.6" rx="1.8"/><rect x="20.7" y="49.4" width="38.3" height="3.6" rx="1.8"/><rect x="46.3" y="21.8" width="12.7" height="12.8" rx="2.2"/></g></svg>
<svg style="position:absolute;left:1489.1px;top:369px;overflow:visible" width="20" height="20" viewBox="0 0 20 20" ><path d="M11.6 0.6Q12.6 -0.3 13.7 0.8L19.4 6.6Q20.5 7.8 19.2 8.8L13.7 11.3L12.3 17.5Q11.7 19.1 10.4 17.8L6.7 14.1L2.3 19.1Q1.3 20.1 0.4 19.3Q-0.4 18.4 0.6 17.5L5.5 12.9L1.8 9.2Q0.7 7.9 2.4 7.5L8.1 5.9L10.2 1.7Z" fill="#96a0a8"/></svg>
<svg style="position:absolute;left:1826.7px;top:312.3px;overflow:visible" width="80.1" height="63" viewBox="0 0 80 63" ><defs><linearGradient id="g37" x1="0" y1="0.1" x2="1" y2="1"><stop offset="0" stop-color="#2ab0ea"/><stop offset="1" stop-color="#0460b8"/></linearGradient></defs><path d="M0 4.5Q0 0 4.5 0H25Q28.5 0 30.6 2.4L34.2 6.6Q36 8.8 39 8.8H75.5Q80 8.8 80 13.3V58.5Q80 63 75.5 63H4.5Q0 63 0 58.5Z" fill="#0870cc"/><path d="M0 18.2Q0 14.7 3.5 14.7H26Q29.5 14.7 32 12.8L33.8 11.6Q35.6 10.5 38.5 10.5H76Q80 10.5 80 14.5V59Q80 63 76 63H4Q0 63 0 59Z" fill="url(#g37)"/><path d="M0 61.2H80V59Q80 63 76 63H4Q0 63 0 59Z" fill="#0458a8" opacity="0.55"/><defs><linearGradient id="g36" x1="0" y1="0" x2="0" y2="1"><stop offset="0" stop-color="#ffffff"/><stop offset="1" stop-color="#cfdbfb"/></linearGradient></defs><circle cx="50.6" cy="22.1" r="4.4" fill="#f3f3f3"/><path d="M11.4 61.8L37.6 34Q39.3 32.2 41 34L67.2 61.8Z" fill="url(#g36)"/></svg>
<svg style="position:absolute;left:1923.6px;top:369px;overflow:visible" width="20" height="20" viewBox="0 0 20 20" ><path d="M11.6 0.6Q12.6 -0.3 13.7 0.8L19.4 6.6Q20.5 7.8 19.2 8.8L13.7 11.3L12.3 17.5Q11.7 19.1 10.4 17.8L6.7 14.1L2.3 19.1Q1.3 20.1 0.4 19.3Q-0.4 18.4 0.6 17.5L5.5 12.9L1.8 9.2Q0.7 7.9 2.4 7.5L8.1 5.9L10.2 1.7Z" fill="#96a0a8"/></svg>
<svg style="position:absolute;left:523.2px;top:438.3px;overflow:visible" width="80.1" height="63" viewBox="0 0 80 63" ><defs><linearGradient id="g39" x1="0" y1="0.1" x2="1" y2="1"><stop offset="0" stop-color="#ffe69e"/><stop offset="1" stop-color="#ffca3c"/></linearGradient></defs><path d="M0 4.5Q0 0 4.5 0H25Q28.5 0 30.6 2.4L34.2 6.6Q36 8.8 39 8.8H75.5Q80 8.8 80 13.3V58.5Q80 63 75.5 63H4.5Q0 63 0 58.5Z" fill="#f8b81c"/><path d="M2 12.5Q2 10 4.5 10H36L31 14.8H2Z" fill="#f1f3f7"/><path d="M0 18.2Q0 14.7 3.5 14.7H26Q29.5 14.7 32 12.8L33.8 11.6Q35.6 10.5 38.5 10.5H76Q80 10.5 80 14.5V59Q80 63 76 63H4Q0 63 0 59Z" fill="url(#g39)"/><path d="M0 61.2H80V59Q80 63 76 63H4Q0 63 0 59Z" fill="#e8ac28" opacity="0.55"/></svg>
<svg style="position:absolute;left:488.20000000000005px;top:461.4px;overflow:visible" width="20.4" height="20.4" viewBox="0 0 20.4 20.4" ><g fill="none" stroke="#0f7ad8" stroke-width="1.8"><path d="M1.9 8A8.6 8.6 0 0 1 18 6.6"/><path d="M18.5 12.4A8.6 8.6 0 0 1 2.4 13.8"/><path d="M19.4 0.4V7.2H12.8" stroke-linejoin="miter"/><path d="M1 20V13.2H7.6" stroke-linejoin="miter"/></g></svg>
<svg style="position:absolute;left:957.6px;top:438.3px;overflow:visible" width="80.1" height="63" viewBox="0 0 80 63" ><defs><linearGradient id="g41" x1="0" y1="0.1" x2="1" y2="1"><stop offset="0" stop-color="#ffe69e"/><stop offset="1" stop-color="#ffca3c"/></linearGradient></defs><path d="M0 4.5Q0 0 4.5 0H25Q28.5 0 30.6 2.4L34.2 6.6Q36 8.8 39 8.8H75.5Q80 8.8 80 13.3V58.5Q80 63 75.5 63H4.5Q0 63 0 58.5Z" fill="#f8b81c"/><path d="M2 12.5Q2 10 4.5 10H36L31 14.8H2Z" fill="#f1f3f7"/><path d="M0 18.2Q0 14.7 3.5 14.7H26Q29.5 14.7 32 12.8L33.8 11.6Q35.6 10.5 38.5 10.5H76Q80 10.5 80 14.5V59Q80 63 76 63H4Q0 63 0 59Z" fill="url(#g41)"/><path d="M0 61.2H80V59Q80 63 76 63H4Q0 63 0 59Z" fill="#e8ac28" opacity="0.55"/></svg>
<svg style="position:absolute;left:922.6px;top:461.4px;overflow:visible" width="20.4" height="20.4" viewBox="0 0 20.4 20.4" ><g fill="none" stroke="#0f7ad8" stroke-width="1.8"><path d="M1.9 8A8.6 8.6 0 0 1 18 6.6"/><path d="M18.5 12.4A8.6 8.6 0 0 1 2.4 13.8"/><path d="M19.4 0.4V7.2H12.8" stroke-linejoin="miter"/><path d="M1 20V13.2H7.6" stroke-linejoin="miter"/></g></svg>
<svg style="position:absolute;left:1392.2px;top:438.3px;overflow:visible" width="80.1" height="63" viewBox="0 0 80 63" ><defs><linearGradient id="g43" x1="0" y1="0.1" x2="1" y2="1"><stop offset="0" stop-color="#f6944e"/><stop offset="0.55" stop-color="#d4747c"/><stop offset="1" stop-color="#a066bc"/></linearGradient><linearGradient id="t44" x1="0" y1="0" x2="1" y2="1"><stop offset="0" stop-color="#d06c0c"/><stop offset="1" stop-color="#a85e2a"/></linearGradient></defs><path d="M0 4.5Q0 0 4.5 0H25Q28.5 0 30.6 2.4L34.2 6.6Q36 8.8 39 8.8H75.5Q80 8.8 80 13.3V58.5Q80 63 75.5 63H4.5Q0 63 0 58.5Z" fill="url(#t44)"/><path d="M0 18.2Q0 14.7 3.5 14.7H26Q29.5 14.7 32 12.8L33.8 11.6Q35.6 10.5 38.5 10.5H76Q80 10.5 80 14.5V59Q80 63 76 63H4Q0 63 0 59Z" fill="url(#g43)"/><path d="M0 61.2H80V59Q80 63 76 63H4Q0 63 0 59Z" fill="#704a80" opacity="0.55"/><g fill="#fbfbfb"><circle cx="35.1" cy="49.2" r="7.4"/><path d="M39.9 17.8Q39.9 16 41.8 16.7L52 20.3Q55.2 21.5 55.2 25V30Q55.2 31.8 53.4 31.1L42.5 27.2V49.2H39.9Z"/></g></svg>
<svg style="position:absolute;left:1826.7px;top:438.3px;overflow:visible" width="80.1" height="63" viewBox="0 0 80 63" ><defs><linearGradient id="g45" x1="0" y1="0.1" x2="1" y2="1"><stop offset="0" stop-color="#ba84fa"/><stop offset="1" stop-color="#8842e4"/></linearGradient><linearGradient id="t46" x1="0" y1="0" x2="1" y2="1"><stop offset="0" stop-color="#8660c0"/><stop offset="1" stop-color="#7a58b8"/></linearGradient></defs><path d="M0 4.5Q0 0 4.5 0H25Q28.5 0 30.6 2.4L34.2 6.6Q36 8.8 39 8.8H75.5Q80 8.8 80 13.3V58.5Q80 63 75.5 63H4.5Q0 63 0 58.5Z" fill="url(#t46)"/><path d="M0 18.2Q0 14.7 3.5 14.7H26Q29.5 14.7 32 12.8L33.8 11.6Q35.6 10.5 38.5 10.5H76Q80 10.5 80 14.5V59Q80 63 76 63H4Q0 63 0 59Z" fill="url(#g45)"/><path d="M0 61.2H80V59Q80 63 76 63H4Q0 63 0 59Z" fill="#6a34b8" opacity="0.55"/><rect x="4" y="19.3" width="8" height="7.7" rx="1.6" fill="#5b4290"/><rect x="4" y="34.8" width="8" height="7.7" rx="1.6" fill="#4a3478"/><rect x="4" y="50.2" width="8" height="7.7" rx="1.6" fill="#3c2a64"/><rect x="67.4" y="19.3" width="8" height="7.7" rx="1.6" fill="#5b4290"/><rect x="67.4" y="34.8" width="8" height="7.7" rx="1.6" fill="#4a3478"/><rect x="67.4" y="50.2" width="8" height="7.7" rx="1.6" fill="#3c2a64"/><path d="M30.3 24.3Q30.3 21.6 32.6 23.1L52.3 36Q54 37.2 52.3 38.4L32.6 52Q30.3 53.5 30.3 50.8Z" fill="#fbf8ff"/></svg>
<div style="position:absolute;left:511.7px;top:633.2px;width:34.2px;height:42.3px;background:#f1f1f3;box-shadow:0.5px 1.2px 1.8px rgba(0,0,0,0.22);overflow:hidden"><div style="position:absolute;left:0;top:0;width:100%;height:100%;filter:blur(0.35px);opacity:0.8"><i style="position:absolute;left:0px;top:0px;width:34.2px;height:3.4px;background:#eeeef0;"></i><i style="position:absolute;left:4.2px;top:4.4px;width:27.3px;height:35.6px;background:#fff;"></i><i style="position:absolute;left:31.5px;top:7.8px;width:2.2px;height:12.2px;background:#4a3a9a;"></i><i style="position:absolute;left:31.5px;top:30px;width:2.2px;height:6px;background:#6a78c8;"></i><i style="position:absolute;left:0.8px;top:4.6px;width:3px;height:3.6px;background:#3a2a2a;border-radius:50%"></i><i style="position:absolute;left:6px;top:7px;width:15px;height:0.8px;background:#b8b8b8;"></i><i style="position:absolute;left:6px;top:9.6px;width:22px;height:0.7px;background:#c8c8c8;"></i><i style="position:absolute;left:6px;top:11.2px;width:20px;height:0.7px;background:#d0d0d0;"></i><i style="position:absolute;left:6px;top:15.2px;width:6px;height:0.7px;background:#b0b0b0;"></i><i style="position:absolute;left:6px;top:17.6px;width:22px;height:0.7px;background:#c0c0c0;"></i><i style="position:absolute;left:7px;top:21px;width:5px;height:0.7px;background:#bbb;"></i><i style="position:absolute;left:8px;top:23.4px;width:7px;height:0.7px;background:#bbb;"></i><i style="position:absolute;left:8.6px;top:26px;width:7px;height:0.7px;background:#bbb;"></i><i style="position:absolute;left:6px;top:30.4px;width:2px;height:1px;background:#3a8ae0;"></i><i style="position:absolute;left:9px;top:30.4px;width:8px;height:0.7px;background:#bbb;"></i><i style="position:absolute;left:1.6px;top:14px;width:1px;height:1.2px;background:#3a9ae8;"></i><i style="position:absolute;left:1.6px;top:17px;width:1px;height:1.2px;background:#3a9ae8;"></i><i style="position:absolute;left:1.6px;top:20px;width:1px;height:1.2px;background:#3a9ae8;"></i><i style="position:absolute;left:1.6px;top:23px;width:1px;height:1.2px;background:#e8a040;"></i><i style="position:absolute;left:1.6px;top:26px;width:1px;height:1.2px;background:#4a8ac8;"></i><i style="position:absolute;left:1.6px;top:29px;width:1px;height:1.2px;background:#4ab8b8;"></i><i style="position:absolute;left:1.6px;top:32px;width:1px;height:1.2px;background:#3a9ae8;"></i><i style="position:absolute;left:1.6px;top:35px;width:1px;height:1.2px;background:#3a9ae8;"></i></div></div>
<div style="position:absolute;left:511.7px;top:701.1px;width:34.2px;height:42.3px;background:#f1f1f3;box-shadow:0.5px 1.2px 1.8px rgba(0,0,0,0.22);overflow:hidden"><div style="position:absolute;left:0;top:0;width:100%;height:100%;filter:blur(0.35px);opacity:0.8"><i style="position:absolute;left:0px;top:0px;width:34.2px;height:3.4px;background:#eeeef0;"></i><i style="position:absolute;left:4.2px;top:4.4px;width:27.3px;height:35.6px;background:#fff;"></i><i style="position:absolute;left:31.5px;top:7.8px;width:2.2px;height:12.2px;background:#4a3a9a;"></i><i style="position:absolute;left:31.5px;top:30px;width:2.2px;height:6px;background:#6a78c8;"></i><i style="position:absolute;left:0.8px;top:4.6px;width:3px;height:3.6px;background:#3a2a2a;border-radius:50%"></i><i style="position:absolute;left:6px;top:7px;width:15px;height:0.8px;background:#b8b8b8;"></i><i style="position:absolute;left:6px;top:9.6px;width:22px;height:0.7px;background:#c8c8c8;"></i><i style="position:absolute;left:6px;top:11.2px;width:20px;height:0.7px;background:#d0d0d0;"></i><i style="position:absolute;left:6px;top:15.2px;width:6px;height:0.7px;background:#b0b0b0;"></i><i style="position:absolute;left:6px;top:17.6px;width:22px;height:0.7px;background:#c0c0c0;"></i><i style="position:absolute;left:7px;top:21px;width:5px;height:0.7px;background:#bbb;"></i><i style="position:absolute;left:8px;top:23.4px;width:7px;height:0.7px;background:#bbb;"></i><i style="position:absolute;left:8.6px;top:26px;width:7px;height:0.7px;background:#bbb;"></i><i style="position:absolute;left:6px;top:30.4px;width:2px;height:1px;background:#3a8ae0;"></i><i style="position:absolute;left:9px;top:30.4px;width:8px;height:0.7px;background:#bbb;"></i><i style="position:absolute;left:1.6px;top:14px;width:1px;height:1.2px;background:#3a9ae8;"></i><i style="position:absolute;left:1.6px;top:17px;width:1px;height:1.2px;background:#3a9ae8;"></i><i style="position:absolute;left:1.6px;top:20px;width:1px;height:1.2px;background:#3a9ae8;"></i><i style="position:absolute;left:1.6px;top:23px;width:1px;height:1.2px;background:#e8a040;"></i><i style="position:absolute;left:1.6px;top:26px;width:1px;height:1.2px;background:#4a8ac8;"></i><i style="position:absolute;left:1.6px;top:29px;width:1px;height:1.2px;background:#4ab8b8;"></i><i style="position:absolute;left:1.6px;top:32px;width:1px;height:1.2px;background:#3a9ae8;"></i><i style="position:absolute;left:1.6px;top:35px;width:1px;height:1.2px;background:#3a9ae8;"></i></div></div>
<div style="position:absolute;left:507.8px;top:782.1px;width:41.8px;height:14.6px;background:#eeeef6;box-shadow:0.5px 1.2px 1.8px rgba(0,0,0,0.22);overflow:hidden"><div style="position:absolute;left:0;top:0;width:100%;height:100%;filter:blur(0.35px);opacity:0.8"><i style="position:absolute;left:1.8px;top:4.9px;width:15.2px;height:7.3px;background:linear-gradient(100deg,#14143c,#3a3a9a 60%,#c8c0f0 75%,#2a2a6a);"></i><i style="position:absolute;left:2px;top:2.8px;width:9px;height:0.7px;background:#999;"></i><i style="position:absolute;left:19px;top:5.4px;width:6px;height:0.7px;background:#8ab0e0;"></i><i style="position:absolute;left:19px;top:8px;width:8px;height:0.9px;background:#99a;"></i><i style="position:absolute;left:29px;top:8px;width:5px;height:0.7px;background:#aab;"></i><i style="position:absolute;left:29px;top:5.4px;width:2px;height:0.7px;background:#8ab0e0;"></i></div></div>
<div style="position:absolute;left:507.8px;top:842.9px;width:41.8px;height:28.2px;background:#f7f7fb;box-shadow:0.5px 1.2px 1.8px rgba(0,0,0,0.22);overflow:hidden"><div style="position:absolute;left:0;top:0;width:100%;height:100%;filter:blur(0.35px);opacity:0.8"><i style="position:absolute;left:0.6px;top:2px;width:2px;height:2.2px;background:#444;border-radius:40%"></i><i style="position:absolute;left:3.6px;top:2.4px;width:3px;height:0.6px;background:#aaa;"></i><i style="position:absolute;left:11.4px;top:2.2px;width:7px;height:0.9px;background:#777;"></i><i style="position:absolute;left:0px;top:0px;width:10.6px;height:28.2px;background:rgba(232,232,246,0.45);"></i><i style="position:absolute;left:12px;top:5.2px;width:6px;height:0.6px;background:#dcdce4;"></i><i style="position:absolute;left:12px;top:8.1px;width:8px;height:0.6px;background:#dcdce4;"></i><i style="position:absolute;left:12px;top:11.0px;width:10px;height:0.6px;background:#dcdce4;"></i><i style="position:absolute;left:12px;top:13.899999999999999px;width:6px;height:0.6px;background:#dcdce4;"></i><i style="position:absolute;left:12px;top:16.8px;width:8px;height:0.6px;background:#dcdce4;"></i><i style="position:absolute;left:12px;top:19.7px;width:10px;height:0.6px;background:#dcdce4;"></i><i style="position:absolute;left:12px;top:22.599999999999998px;width:6px;height:0.6px;background:#dcdce4;"></i><i style="position:absolute;left:12px;top:25.5px;width:8px;height:0.6px;background:#dcdce4;"></i><i style="position:absolute;left:1.4px;top:7.0px;width:1px;height:0.9px;background:#a8d0f2;"></i><i style="position:absolute;left:1.4px;top:9.2px;width:1px;height:0.9px;background:#a8d0f2;"></i><i style="position:absolute;left:1.4px;top:11.4px;width:1px;height:0.9px;background:#a8d0f2;"></i><i style="position:absolute;left:1.4px;top:13.600000000000001px;width:1px;height:0.9px;background:#a8d0f2;"></i><i style="position:absolute;left:1.4px;top:15.8px;width:1px;height:0.9px;background:#a8d0f2;"></i><i style="position:absolute;left:1.4px;top:18.0px;width:1px;height:0.9px;background:#a8d0f2;"></i><i style="position:absolute;left:1.4px;top:20.200000000000003px;width:1px;height:0.9px;background:#a8d0f2;"></i><i style="position:absolute;left:3.2px;top:7.1px;width:4px;height:0.5px;background:#e2e2ea;"></i><i style="position:absolute;left:3.2px;top:9.3px;width:6px;height:0.5px;background:#e2e2ea;"></i><i style="position:absolute;left:3.2px;top:11.5px;width:4px;height:0.5px;background:#e2e2ea;"></i><i style="position:absolute;left:3.2px;top:13.7px;width:6px;height:0.5px;background:#e2e2ea;"></i><i style="position:absolute;left:3.2px;top:15.9px;width:4px;height:0.5px;background:#e2e2ea;"></i><i style="position:absolute;left:3.2px;top:18.1px;width:6px;height:0.5px;background:#e2e2ea;"></i><i style="position:absolute;left:3.2px;top:20.3px;width:4px;height:0.5px;background:#e2e2ea;"></i><i style="position:absolute;left:19px;top:10.8px;width:9px;height:0.6px;background:#f6bcbc;"></i><i style="position:absolute;left:5.5px;top:11px;width:3.4px;height:0.8px;background:#f0a0a0;transform:rotate(35deg)"></i></div></div>
<div style="position:absolute;left:507.8px;top:910.9px;width:41.8px;height:28.2px;background:#f7f7fb;box-shadow:0.5px 1.2px 1.8px rgba(0,0,0,0.22);overflow:hidden"><div style="position:absolute;left:0;top:0;width:100%;height:100%;filter:blur(0.35px);opacity:0.8"><i style="position:absolute;left:0.6px;top:2px;width:2px;height:2.2px;background:#444;border-radius:40%"></i><i style="position:absolute;left:3.6px;top:2.4px;width:3px;height:0.6px;background:#aaa;"></i><i style="position:absolute;left:11.4px;top:2.2px;width:7px;height:0.9px;background:#777;"></i><i style="position:absolute;left:0px;top:0px;width:10.6px;height:28.2px;background:rgba(232,232,246,0.45);"></i><i style="position:absolute;left:12px;top:5.2px;width:6px;height:0.6px;background:#dcdce4;"></i><i style="position:absolute;left:12px;top:8.1px;width:8px;height:0.6px;background:#dcdce4;"></i><i style="position:absolute;left:12px;top:11.0px;width:10px;height:0.6px;background:#dcdce4;"></i><i style="position:absolute;left:12px;top:13.899999999999999px;width:6px;height:0.6px;background:#dcdce4;"></i><i style="position:absolute;left:12px;top:16.8px;width:8px;height:0.6px;background:#dcdce4;"></i><i style="position:absolute;left:12px;top:19.7px;width:10px;height:0.6px;background:#dcdce4;"></i><i style="position:absolute;left:12px;top:22.599999999999998px;width:6px;height:0.6px;background:#dcdce4;"></i><i style="position:absolute;left:12px;top:25.5px;width:8px;height:0.6px;background:#dcdce4;"></i><i style="position:absolute;left:1.4px;top:7.0px;width:1px;height:0.9px;background:#a8d0f2;"></i><i style="position:absolute;left:1.4px;top:9.2px;width:1px;height:0.9px;background:#a8d0f2;"></i><i style="position:absolute;left:1.4px;top:11.4px;width:1px;height:0.9px;background:#a8d0f2;"></i><i style="position:absolute;left:1.4px;top:13.600000000000001px;width:1px;height:0.9px;background:#a8d0f2;"></i><i style="position:absolute;left:1.4px;top:15.8px;width:1px;height:0.9px;background:#a8d0f2;"></i><i style="position:absolute;left:1.4px;top:18.0px;width:1px;height:0.9px;background:#a8d0f2;"></i><i style="position:absolute;left:1.4px;top:20.200000000000003px;width:1px;height:0.9px;background:#a8d0f2;"></i><i style="position:absolute;left:3.2px;top:7.1px;width:4px;height:0.5px;background:#e2e2ea;"></i><i style="position:absolute;left:3.2px;top:9.3px;width:6px;height:0.5px;background:#e2e2ea;"></i><i style="position:absolute;left:3.2px;top:11.5px;width:4px;height:0.5px;background:#e2e2ea;"></i><i style="position:absolute;left:3.2px;top:13.7px;width:6px;height:0.5px;background:#e2e2ea;"></i><i style="position:absolute;left:3.2px;top:15.9px;width:4px;height:0.5px;background:#e2e2ea;"></i><i style="position:absolute;left:3.2px;top:18.1px;width:6px;height:0.5px;background:#e2e2ea;"></i><i style="position:absolute;left:3.2px;top:20.3px;width:4px;height:0.5px;background:#e2e2ea;"></i></div></div>
<div style="position:absolute;left:511.7px;top:972.5px;width:33px;height:41.6px;background:#f1f1f3;box-shadow:0.5px 1.2px 1.8px rgba(0,0,0,0.22);overflow:hidden"><div style="position:absolute;left:0;top:0;width:100%;height:100%;filter:blur(0.35px);opacity:0.8"><i style="position:absolute;left:1.9px;top:2.6px;width:8.4px;height:4.8px;background:#0a6ccc;"></i><i style="position:absolute;left:11.7px;top:2.6px;width:8.6px;height:4.8px;background:#0a6ccc;"></i><i style="position:absolute;left:21.6px;top:2.6px;width:8.4px;height:4.8px;background:#fafafa;"></i><i style="position:absolute;left:3.4px;top:8.4px;width:5px;height:0.6px;background:#999;"></i><i style="position:absolute;left:12.6px;top:8.4px;width:7px;height:0.6px;background:#999;"></i><i style="position:absolute;left:22.2px;top:8.4px;width:7px;height:0.6px;background:#999;"></i><i style="position:absolute;left:1.9px;top:11.4px;width:8.4px;height:4.6px;background:#f8f8f8;"></i><i style="position:absolute;left:11.7px;top:11.4px;width:8.6px;height:4.6px;background:#f8f8f8;"></i><i style="position:absolute;left:21.6px;top:11.4px;width:8.4px;height:4.6px;background:#f8f8f8;"></i><i style="position:absolute;left:3px;top:16.6px;width:6px;height:0.6px;background:#bbb;"></i><i style="position:absolute;left:12.6px;top:16.6px;width:6px;height:0.6px;background:#aaa;"></i><i style="position:absolute;left:22.2px;top:16.6px;width:6px;height:0.6px;background:#aaa;"></i><i style="position:absolute;left:4.5px;top:22.4px;width:22.6px;height:0.8px;background:#6ab0e8;"></i><i style="position:absolute;left:26.4px;top:21.8px;width:1.3px;height:1.8px;background:#2a84d8;border-radius:50%"></i><i style="position:absolute;left:2.2px;top:22px;width:1.2px;height:1.4px;background:#aaa;"></i><i style="position:absolute;left:4.5px;top:27.8px;width:22.6px;height:0.8px;background:#6ab0e8;"></i><i style="position:absolute;left:26.4px;top:27.2px;width:1.3px;height:1.8px;background:#2a84d8;border-radius:50%"></i><i style="position:absolute;left:2.2px;top:27.4px;width:1.2px;height:1.4px;background:#aaa;"></i><i style="position:absolute;left:1.6px;top:33px;width:3px;height:0.8px;background:#999;"></i><i style="position:absolute;left:26px;top:32.6px;width:1.6px;height:1.4px;background:#aaa;"></i><i style="position:absolute;left:29.6px;top:32.6px;width:1.4px;height:1.4px;background:#aaa;"></i><i style="position:absolute;left:0px;top:36.9px;width:33px;height:4.7px;background:#d9d9de;"></i><i style="position:absolute;left:1px;top:38.4px;width:1.4px;height:1.6px;background:#c8a8d8;"></i><i style="position:absolute;left:3.6px;top:38.4px;width:1.6px;height:1.6px;background:#f06a6a;"></i><i style="position:absolute;left:6.6px;top:38.4px;width:1.6px;height:1.6px;background:#5aa8f0;"></i><i style="position:absolute;left:9.6px;top:38.2px;width:2.4px;height:2px;background:#aaa;"></i><i style="position:absolute;left:13.6px;top:38px;width:2px;height:2.4px;background:#aaa;"></i><i style="position:absolute;left:17.4px;top:38.8px;width:5px;height:0.8px;background:#999;"></i><i style="position:absolute;left:24px;top:38.6px;width:5px;height:1.6px;background:#b0b0b4;"></i><i style="position:absolute;left:30.4px;top:38.2px;width:1.6px;height:2px;background:#2a84e0;"></i></div></div>
<div style="position:absolute;left:508px;top:1040px;width:42px;height:40.8px;background:#fff;box-shadow:0.5px 1.2px 1.8px rgba(0,0,0,0.22);overflow:hidden"><div style="position:absolute;left:0;top:0;width:100%;height:100%;filter:blur(0.35px);opacity:0.8"><i style="position:absolute;left:0px;top:0px;width:42px;height:1.6px;background:#ececf4;"></i><i style="position:absolute;left:1px;top:3.6px;width:3px;height:5px;background:#fff;border:0.5px solid #ccc"></i><i style="position:absolute;left:6px;top:4px;width:2.4px;height:8px;background:#fff;border:0.5px solid #bbb"></i><i style="position:absolute;left:12px;top:4.0px;width:5.0px;height:0.5px;background:#d4d4dc;"></i><i style="position:absolute;left:12px;top:5.9px;width:6.5px;height:0.5px;background:#d4d4dc;"></i><i style="position:absolute;left:12px;top:7.8px;width:8.0px;height:0.5px;background:#d4d4dc;"></i><i style="position:absolute;left:12px;top:9.7px;width:5.0px;height:0.5px;background:#d4d4dc;"></i><i style="position:absolute;left:12px;top:11.6px;width:6.5px;height:0.5px;background:#d4d4dc;"></i><i style="position:absolute;left:12px;top:13.5px;width:8.0px;height:0.5px;background:#d4d4dc;"></i><i style="position:absolute;left:12px;top:15.399999999999999px;width:5.0px;height:0.5px;background:#d4d4dc;"></i><i style="position:absolute;left:12px;top:17.299999999999997px;width:6.5px;height:0.5px;background:#d4d4dc;"></i><i style="position:absolute;left:12px;top:19.2px;width:8.0px;height:0.5px;background:#d4d4dc;"></i><i style="position:absolute;left:12px;top:21.099999999999998px;width:5.0px;height:0.5px;background:#d4d4dc;"></i><i style="position:absolute;left:12px;top:23.0px;width:6.5px;height:0.5px;background:#d4d4dc;"></i><i style="position:absolute;left:22px;top:22px;width:11px;height:13px;background:#fdfdfd;box-shadow:0 0 1px rgba(0,0,0,.4)"></i><i style="position:absolute;left:24px;top:23.6px;width:6px;height:0.5px;background:#d0d0d8;"></i><i style="position:absolute;left:24px;top:25.8px;width:6px;height:0.5px;background:#d0d0d8;"></i><i style="position:absolute;left:24px;top:28.0px;width:6px;height:0.5px;background:#d0d0d8;"></i><i style="position:absolute;left:24px;top:30.200000000000003px;width:6px;height:0.5px;background:#d0d0d8;"></i><i style="position:absolute;left:24px;top:32.400000000000006px;width:6px;height:0.5px;background:#d0d0d8;"></i><i style="position:absolute;left:15.6px;top:0.6px;width:1.4px;height:1.4px;background:#e66;"></i><i style="position:absolute;left:10px;top:23px;width:1.2px;height:1.2px;background:#e66;"></i><i style="position:absolute;left:33px;top:27px;width:1.4px;height:1.4px;background:#e44;"></i><i style="position:absolute;left:17px;top:29px;width:6px;height:0.8px;background:#e55;transform:rotate(-38deg)"></i><i style="position:absolute;left:25px;top:37.6px;width:9px;height:0.7px;background:#e99;"></i></div></div>
<div style="position:absolute;left:508px;top:1108.2px;width:42px;height:40.8px;background:#fff;box-shadow:0.5px 1.2px 1.8px rgba(0,0,0,0.22);overflow:hidden"><div style="position:absolute;left:0;top:0;width:100%;height:100%;filter:blur(0.35px);opacity:0.8"><i style="position:absolute;left:0px;top:0px;width:42px;height:1.6px;background:#ececf4;"></i><i style="position:absolute;left:1px;top:3.6px;width:3px;height:5px;background:#fff;border:0.5px solid #ccc"></i><i style="position:absolute;left:6px;top:4px;width:2.4px;height:8px;background:#fff;border:0.5px solid #bbb"></i><i style="position:absolute;left:12px;top:4.0px;width:5.0px;height:0.5px;background:#d4d4dc;"></i><i style="position:absolute;left:12px;top:5.9px;width:6.5px;height:0.5px;background:#d4d4dc;"></i><i style="position:absolute;left:12px;top:7.8px;width:8.0px;height:0.5px;background:#d4d4dc;"></i><i style="position:absolute;left:12px;top:9.7px;width:5.0px;height:0.5px;background:#d4d4dc;"></i><i style="position:absolute;left:12px;top:11.6px;width:6.5px;height:0.5px;background:#d4d4dc;"></i><i style="position:absolute;left:12px;top:13.5px;width:8.0px;height:0.5px;background:#d4d4dc;"></i><i style="position:absolute;left:12px;top:15.399999999999999px;width:5.0px;height:0.5px;background:#d4d4dc;"></i><i style="position:absolute;left:12px;top:17.299999999999997px;width:6.5px;height:0.5px;background:#d4d4dc;"></i><i style="position:absolute;left:12px;top:19.2px;width:8.0px;height:0.5px;background:#d4d4dc;"></i><i style="position:absolute;left:12px;top:21.099999999999998px;width:5.0px;height:0.5px;background:#d4d4dc;"></i><i style="position:absolute;left:12px;top:23.0px;width:6.5px;height:0.5px;background:#d4d4dc;"></i><i style="position:absolute;left:22px;top:22px;width:11px;height:13px;background:#fdfdfd;box-shadow:0 0 1px rgba(0,0,0,.4)"></i><i style="position:absolute;left:24px;top:23.6px;width:6px;height:0.5px;background:#d0d0d8;"></i><i style="position:absolute;left:24px;top:25.8px;width:6px;height:0.5px;background:#d0d0d8;"></i><i style="position:absolute;left:24px;top:28.0px;width:6px;height:0.5px;background:#d0d0d8;"></i><i style="position:absolute;left:24px;top:30.200000000000003px;width:6px;height:0.5px;background:#d0d0d8;"></i><i style="position:absolute;left:24px;top:32.400000000000006px;width:6px;height:0.5px;background:#d0d0d8;"></i></div></div>
<div style="position:absolute;left:508px;top:1185px;width:42px;height:22.4px;background:#fff;box-shadow:0.5px 1.2px 1.8px rgba(0,0,0,0.22);overflow:hidden"><div style="position:absolute;left:0;top:0;width:100%;height:100%;filter:blur(0.35px);opacity:0.8"><i style="position:absolute;left:0px;top:0px;width:42px;height:1.4px;background:#ececf4;"></i><i style="position:absolute;left:1px;top:3.2px;width:3px;height:0.6px;background:#aaa;"></i><i style="position:absolute;left:1px;top:5px;width:2px;height:0.6px;background:#bbb;"></i><i style="position:absolute;left:34px;top:13px;width:6px;height:1.6px;background:#e8e8ee;"></i><i style="position:absolute;left:20px;top:1.8px;width:10px;height:0.5px;background:#ccd;"></i></div></div>
<div style="position:absolute;left:508px;top:1246.7px;width:42px;height:40px;background:#fff;box-shadow:0.5px 1.2px 1.8px rgba(0,0,0,0.22);overflow:hidden"><div style="position:absolute;left:0;top:0;width:100%;height:100%;filter:blur(0.35px);opacity:0.8"><i style="position:absolute;left:0px;top:0px;width:42px;height:1.6px;background:#ececf4;"></i><i style="position:absolute;left:3.6px;top:1.6px;width:0.5px;height:38px;background:#dde;"></i><i style="position:absolute;left:6px;top:6px;width:2.4px;height:2.4px;background:#2a9ae8;"></i><i style="position:absolute;left:6px;top:10px;width:2.4px;height:2.4px;background:#2a9ae8;"></i><i style="position:absolute;left:4px;top:14.4px;width:7px;height:1.4px;background:#334;"></i><i style="position:absolute;left:4px;top:16.4px;width:7px;height:0.8px;background:#99a;"></i><i style="position:absolute;left:16px;top:4px;width:4px;height:0.5px;background:#b8b8c0;"></i><i style="position:absolute;left:16px;top:6px;width:6px;height:0.5px;background:#b8b8c0;"></i><i style="position:absolute;left:16px;top:8px;width:4px;height:0.5px;background:#b8b8c0;"></i><i style="position:absolute;left:16px;top:10px;width:6px;height:0.5px;background:#b8b8c0;"></i><i style="position:absolute;left:16px;top:12px;width:4px;height:0.5px;background:#b8b8c0;"></i><i style="position:absolute;left:16px;top:14px;width:6px;height:0.5px;background:#b8b8c0;"></i><i style="position:absolute;left:16px;top:16px;width:4px;height:0.5px;background:#b8b8c0;"></i><i style="position:absolute;left:16px;top:18px;width:6px;height:0.5px;background:#b8b8c0;"></i><i style="position:absolute;left:16px;top:20px;width:4px;height:0.5px;background:#b8b8c0;"></i><i style="position:absolute;left:30px;top:7px;width:2.4px;height:2.4px;background:#2ac8b8;border-radius:50%"></i><i style="position:absolute;left:24px;top:20px;width:10px;height:12px;background:#fdfdfd;box-shadow:0 0 1px rgba(0,0,0,.4)"></i><i style="position:absolute;left:26px;top:21.6px;width:6px;height:0.5px;background:#b8b8c0;"></i><i style="position:absolute;left:26px;top:23.8px;width:6px;height:0.5px;background:#b8b8c0;"></i><i style="position:absolute;left:26px;top:26.0px;width:6px;height:0.5px;background:#b8b8c0;"></i><i style="position:absolute;left:26px;top:28.200000000000003px;width:6px;height:0.5px;background:#b8b8c0;"></i><i style="position:absolute;left:26px;top:30.400000000000002px;width:6px;height:0.5px;background:#b8b8c0;"></i></div></div>
<svg style="position:absolute;left:0;top:0;overflow:visible;pointer-events:none" width="2048" height="1282" viewBox="0 0 2048 1282">
<defs><filter id="ash" x="-20%" y="-20%" width="140%" height="140%"><feGaussianBlur in="SourceAlpha" stdDeviation="1.6"/><feOffset dx="1.5" dy="2"/><feComponentTransfer><feFuncA type="linear" slope="0.45"/></feComponentTransfer><feMerge><feMergeNode/><feMergeNode in="SourceGraphic"/></feMerge></filter></defs>
<g filter="url(#ash)" fill="#fb4447" stroke="none">
<path d="M389.8 930.8L270.2 1080.6" stroke="#fb4447" stroke-width="7.4" stroke-linecap="round" fill="none"/>
<path d="M255 1096.4L259.8 1070.6L278.4 1085.8Z"/>
</g></svg>
<svg style="position:absolute;left:0;top:0;overflow:visible" width="2048" height="230" viewBox="0 0 2048 230">
<defs><filter id="wsh" x="-5%" y="-30%" width="110%" height="170%"><feGaussianBlur in="SourceAlpha" stdDeviation="1.7"/><feOffset dx="1.2" dy="2.6"/><feComponentTransfer><feFuncA type="linear" slope="0.42"/></feComponentTransfer><feMerge><feMergeNode/><feMergeNode in="SourceGraphic"/></feMerge></filter></defs>
<g filter="url(#wsh)"><text x="1493.2" y="161.6" font-family="Liberation Sans, sans-serif" font-size="37.7" letter-spacing="0.36" fill="#ff3a3a" stroke="#fff" stroke-width="5.6" stroke-linejoin="round" paint-order="stroke">DeveloperPublish</text></g>
<text x="1493.2" y="161.6" font-family="Liberation Sans, sans-serif" font-size="37.7" letter-spacing="0.36" fill="#ff3a3a" stroke="#fff" stroke-width="0.22">DeveloperPublish</text></svg>
<span class="t" style="left:36.20px;top:5.37px;font-size:22.3px;color:#000;letter-spacing:-0.296px;-webkit-text-stroke:0.24px #f2f3f9;">File Explorer</span>
<span class="t" style="left:80.60px;top:77.77px;font-size:22.3px;color:#a2a2a2;letter-spacing:0.595px;-webkit-text-stroke:0.24px #f2f3f9;">New</span>
<span class="t" style="left:819.80px;top:77.77px;font-size:22.3px;color:#a2a2a2;letter-spacing:0.231px;-webkit-text-stroke:0.24px #f2f3f9;">Sort</span>
<span class="t" style="left:986.30px;top:77.77px;font-size:22.3px;color:#1b1b1b;letter-spacing:0.521px;-webkit-text-stroke:0.24px #f2f3f9;">View</span>
<span class="t" style="left:334.60px;top:170.37px;font-size:22.3px;color:#000;letter-spacing:-0.345px;-webkit-text-stroke:0.24px #fff;">Quick access</span>
<span class="t" style="left:85.80px;top:239.67px;font-size:22.3px;color:#000;letter-spacing:-0.399px;-webkit-text-stroke:0.24px #cce8ff;">Quick access</span>
<span class="t" style="left:85.80px;top:315.57px;font-size:22.3px;color:#000;letter-spacing:0.417px;-webkit-text-stroke:0.24px #fff;">Desktop</span>
<span class="t" style="left:100.70px;top:376.57px;font-size:22.3px;color:#000;letter-spacing:-0.050px;-webkit-text-stroke:0.24px #fff;">OneDrive - Personal</span>
<span class="t" style="left:100.70px;top:437.57px;font-size:22.3px;color:#000;letter-spacing:-0.037px;-webkit-text-stroke:0.24px #fff;">Senthil Kumar</span>
<span class="t" style="left:100.70px;top:498.57px;font-size:22.3px;color:#000;letter-spacing:-0.866px;-webkit-text-stroke:0.24px #fff;">This PC</span>
<span class="t" style="left:116.50px;top:559.57px;font-size:22.3px;color:#000;letter-spacing:0.301px;-webkit-text-stroke:0.24px #fff;">Desktop</span>
<span class="t" style="left:116.50px;top:620.57px;font-size:22.3px;color:#000;letter-spacing:0.352px;-webkit-text-stroke:0.24px #fff;">Documents</span>
<span class="t" style="left:116.50px;top:681.57px;font-size:22.3px;color:#000;letter-spacing:0.336px;-webkit-text-stroke:0.24px #fff;">Downloads</span>
<span class="t" style="left:116.50px;top:742.57px;font-size:22.3px;color:#000;letter-spacing:0.191px;-webkit-text-stroke:0.24px #fff;">Music</span>
<span class="t" style="left:116.50px;top:803.57px;font-size:22.3px;color:#000;letter-spacing:-0.264px;-webkit-text-stroke:0.24px #fff;">Pictures</span>
<span class="t" style="left:116.50px;top:864.57px;font-size:22.3px;color:#000;letter-spacing:0.224px;-webkit-text-stroke:0.24px #fff;">Videos</span>
<span class="t" style="left:116.50px;top:925.57px;font-size:22.3px;color:#000;letter-spacing:-0.332px;-webkit-text-stroke:0.24px #fff;">Windows-SSD (C:)</span>
<span class="t" style="left:100.70px;top:986.57px;font-size:22.3px;color:#000;letter-spacing:-0.227px;-webkit-text-stroke:0.24px #fff;">Libraries</span>
<span class="t" style="left:100.70px;top:1047.57px;font-size:22.3px;color:#000;letter-spacing:0.586px;-webkit-text-stroke:0.24px #fff;">Network</span>
<span class="t" style="left:100.70px;top:1108.57px;font-size:22.3px;color:#000;letter-spacing:0.041px;-webkit-text-stroke:0.24px #e5f3ff;">Control Panel</span>
<span class="t" style="left:100.70px;top:1169.57px;font-size:22.3px;color:#000;letter-spacing:-0.533px;-webkit-text-stroke:0.24px #fff;">Recycle Bin</span>
<span class="t" style="left:453.30px;top:245.07px;font-size:22.3px;color:#1e3287;letter-spacing:-0.050px;-webkit-text-stroke:0.24px #fff;">Folders (8)</span>
<span class="t" style="left:452.90px;top:573.47px;font-size:22.3px;color:#1e3287;letter-spacing:-0.134px;-webkit-text-stroke:0.24px #fff;">Recent files (20)</span>
<span class="t" style="left:619.10px;top:305.47px;font-size:22.3px;color:#000;letter-spacing:0.401px;-webkit-text-stroke:0.24px #fff;">Desktop</span>
<span class="t" style="left:619.10px;top:338.47px;font-size:22.3px;color:#6e6e6e;letter-spacing:-0.866px;-webkit-text-stroke:0.24px #fff;">This PC</span>
<span class="t" style="left:1053.50px;top:305.47px;font-size:22.3px;color:#000;letter-spacing:0.386px;-webkit-text-stroke:0.24px #fff;">Downloads</span>
<span class="t" style="left:1053.50px;top:338.47px;font-size:22.3px;color:#6e6e6e;letter-spacing:-0.866px;-webkit-text-stroke:0.24px #fff;">This PC</span>
<span class="t" style="left:1488.10px;top:305.47px;font-size:22.3px;color:#000;letter-spacing:0.427px;-webkit-text-stroke:0.24px #fff;">Documents</span>
<span class="t" style="left:1488.10px;top:338.47px;font-size:22.3px;color:#6e6e6e;letter-spacing:-0.866px;-webkit-text-stroke:0.24px #fff;">This PC</span>
<span class="t" style="left:1922.60px;top:305.47px;font-size:22.3px;color:#000;letter-spacing:-0.192px;-webkit-text-stroke:0.24px #fff;">Pictures</span>
<span class="t" style="left:1922.60px;top:338.47px;font-size:22.3px;color:#6e6e6e;letter-spacing:-0.866px;-webkit-text-stroke:0.24px #fff;">This PC</span>
<span class="t" style="left:619.10px;top:431.47px;font-size:22.3px;color:#000;letter-spacing:0.510px;-webkit-text-stroke:0.24px #fff;">Company</span>
<span class="t" style="left:619.10px;top:464.47px;font-size:22.3px;color:#6e6e6e;letter-spacing:-0.011px;-webkit-text-stroke:0.24px #fff;">OneDrive - Personal</span>
<span class="t" style="left:1053.50px;top:431.47px;font-size:22.3px;color:#000;letter-spacing:0.434px;-webkit-text-stroke:0.24px #fff;">internship-letters</span>
<span class="t" style="left:1053.50px;top:464.47px;font-size:22.3px;color:#6e6e6e;letter-spacing:0.210px;-webkit-text-stroke:0.24px #fff;">OneDrive -...\Company</span>
<span class="t" style="left:1488.10px;top:431.47px;font-size:22.3px;color:#000;letter-spacing:0.316px;-webkit-text-stroke:0.24px #fff;">Music</span>
<span class="t" style="left:1488.10px;top:464.47px;font-size:22.3px;color:#6e6e6e;letter-spacing:-0.866px;-webkit-text-stroke:0.24px #fff;">This PC</span>
<span class="t" style="left:1922.60px;top:431.47px;font-size:22.3px;color:#000;letter-spacing:0.284px;-webkit-text-stroke:0.24px #fff;">Videos</span>
<span class="t" style="left:1922.60px;top:464.47px;font-size:22.3px;color:#6e6e6e;letter-spacing:-0.866px;-webkit-text-stroke:0.24px #fff;">This PC</span>
<span class="t" style="left:569.00px;top:645.07px;font-size:22.3px;color:#000;letter-spacing:0.069px;-webkit-text-stroke:0.24px #fff;">Screenshot 2022-01-05 181010.png</span>
<span class="t" style="left:1471.20px;top:645.07px;font-size:22.3px;color:#6e6e6e;letter-spacing:0.090px;-webkit-text-stroke:0.24px #fff;">Senthil Kumar\AppData\Local\Packages\Microsoft.Screen</span>
<span class="t" style="left:2046.50px;top:645.07px;font-size:22.3px;color:#6e6e6e;letter-spacing:0.000px;-webkit-text-stroke:0.24px #fff;">Sketch</span>
<span class="t" style="left:569.00px;top:712.90px;font-size:22.3px;color:#000;letter-spacing:0.069px;-webkit-text-stroke:0.24px #fff;">Screenshot 2022-01-05 180350.png</span>
<span class="t" style="left:1471.20px;top:712.90px;font-size:22.3px;color:#6e6e6e;letter-spacing:0.090px;-webkit-text-stroke:0.24px #fff;">Senthil Kumar\AppData\Local\Packages\Microsoft.Screen</span>
<span class="t" style="left:2046.50px;top:712.90px;font-size:22.3px;color:#6e6e6e;letter-spacing:0.000px;-webkit-text-stroke:0.24px #fff;">Sketch</span>
<span class="t" style="left:569.00px;top:780.73px;font-size:22.3px;color:#000;letter-spacing:0.069px;-webkit-text-stroke:0.24px #fff;">Screenshot 2022-01-05 180224.png</span>
<span class="t" style="left:1471.20px;top:780.73px;font-size:22.3px;color:#6e6e6e;letter-spacing:0.090px;-webkit-text-stroke:0.24px #fff;">Senthil Kumar\AppData\Local\Packages\Microsoft.Screen</span>
<span class="t" style="left:2046.50px;top:780.73px;font-size:22.3px;color:#6e6e6e;letter-spacing:0.000px;-webkit-text-stroke:0.24px #fff;">Sketch</span>
<span class="t" style="left:569.00px;top:848.56px;font-size:22.3px;color:#000;letter-spacing:0.069px;-webkit-text-stroke:0.24px #fff;">Screenshot 2022-01-05 180023.png</span>
<span class="t" style="left:1471.20px;top:848.56px;font-size:22.3px;color:#6e6e6e;letter-spacing:0.000px;-webkit-text-stroke:0.24px #fff;">This PC\Downloads</span>
<span class="t" style="left:569.00px;top:916.39px;font-size:22.3px;color:#000;letter-spacing:0.069px;-webkit-text-stroke:0.24px #fff;">Screenshot 2022-01-05 180023.png</span>
<span class="t" style="left:1471.20px;top:916.39px;font-size:22.3px;color:#6e6e6e;letter-spacing:0.090px;-webkit-text-stroke:0.24px #fff;">Senthil Kumar\AppData\Local\Packages\Microsoft.Screen</span>
<span class="t" style="left:2046.50px;top:916.39px;font-size:22.3px;color:#6e6e6e;letter-spacing:0.000px;-webkit-text-stroke:0.24px #fff;">Sketch</span>
<span class="t" style="left:569.00px;top:984.22px;font-size:22.3px;color:#000;letter-spacing:0.069px;-webkit-text-stroke:0.24px #fff;">Screenshot 2022-01-05 174328.png</span>
<span class="t" style="left:1471.20px;top:984.22px;font-size:22.3px;color:#6e6e6e;letter-spacing:0.090px;-webkit-text-stroke:0.24px #fff;">Senthil Kumar\AppData\Local\Packages\Microsoft.Screen</span>
<span class="t" style="left:2046.50px;top:984.22px;font-size:22.3px;color:#6e6e6e;letter-spacing:0.000px;-webkit-text-stroke:0.24px #fff;">Sketch</span>
<span class="t" style="left:569.00px;top:1052.05px;font-size:22.3px;color:#000;letter-spacing:0.069px;-webkit-text-stroke:0.24px #fff;">Screenshot 2022-01-05 001223.png</span>
<span class="t" style="left:1471.20px;top:1052.05px;font-size:22.3px;color:#6e6e6e;letter-spacing:0.000px;-webkit-text-stroke:0.24px #fff;">This PC\Downloads</span>
<span class="t" style="left:569.00px;top:1119.88px;font-size:22.3px;color:#000;letter-spacing:0.069px;-webkit-text-stroke:0.24px #fff;">Screenshot 2022-01-05 001223.png</span>
<span class="t" style="left:1471.20px;top:1119.88px;font-size:22.3px;color:#6e6e6e;letter-spacing:0.090px;-webkit-text-stroke:0.24px #fff;">Senthil Kumar\AppData\Local\Packages\Microsoft.Screen</span>
<span class="t" style="left:2046.50px;top:1119.88px;font-size:22.3px;color:#6e6e6e;letter-spacing:0.000px;-webkit-text-stroke:0.24px #fff;">Sketch</span>
<span class="t" style="left:569.00px;top:1187.71px;font-size:22.3px;color:#000;letter-spacing:0.069px;-webkit-text-stroke:0.24px #fff;">Screenshot 2022-01-05 000958.png</span>
<span class="t" style="left:1471.20px;top:1187.71px;font-size:22.3px;color:#6e6e6e;letter-spacing:0.090px;-webkit-text-stroke:0.24px #fff;">Senthil Kumar\AppData\Local\Packages\Microsoft.Screen</span>
<span class="t" style="left:2046.50px;top:1187.71px;font-size:22.3px;color:#6e6e6e;letter-spacing:0.000px;-webkit-text-stroke:0.24px #fff;">Sketch</span>
<span class="t" style="left:569.00px;top:1255.54px;font-size:22.3px;color:#000;letter-spacing:0.123px;-webkit-text-stroke:0.24px #fff;">Screenshot 2022-01-04 235811.png</span>
<span class="t" style="left:1471.20px;top:1255.54px;font-size:22.3px;color:#6e6e6e;letter-spacing:0.090px;-webkit-text-stroke:0.24px #fff;">Senthil Kumar\AppData\Local\Packages\Microsoft.Screen</span>
<span class="t" style="left:2046.50px;top:1255.54px;font-size:22.3px;color:#6e6e6e;letter-spacing:0.000px;-webkit-text-stroke:0.24px #fff;">Sketch</span></body></html>
